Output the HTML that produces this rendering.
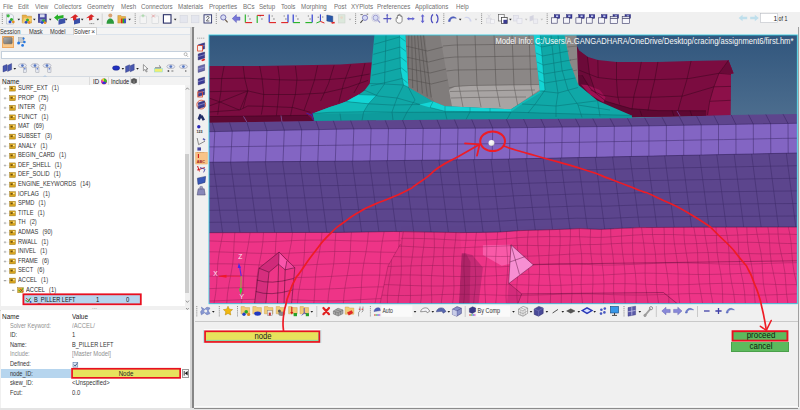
<!DOCTYPE html>
<html><head><meta charset="utf-8"><title>HyperMesh</title>
<style>
html,body{margin:0;padding:0;}
body{width:800px;height:410px;overflow:hidden;background:#f0f0f0;position:relative;font-family:"Liberation Sans",sans-serif;font-size:7px;color:#222;}
#vp{position:absolute;left:0;top:0;}
#ov{position:absolute;left:0;top:0;pointer-events:none;}
.abs{position:absolute;}
.t{position:absolute;white-space:nowrap;line-height:1;}
.t i.g{display:inline-block;width:4.9px;}

</style></head>
<body>
<svg id="vp" width="800" height="410" viewBox="0 0 800 410">
<defs><linearGradient id="bg" x1="0" y1="0" x2="0" y2="1"><stop offset="0" stop-color="#31567d"/><stop offset="0.3" stop-color="#4c6d8e"/><stop offset="1" stop-color="#7090b0"/></linearGradient><clipPath id="vpc"><rect x="209" y="35" width="588" height="268.5"/></clipPath></defs>
<rect x="209" y="35" width="588" height="268.5" fill="url(#bg)"/>
<g clip-path="url(#vpc)">
<polygon points="209.0,66.0 260.0,66.0 300.0,65.3 340.0,64.5 370.0,62.6 376.0,62.3 376.0,122.0 209.0,122.7" fill="#7b0c40" />
<polygon points="209.0,116.6 308.0,115.3 314.0,120.9 209.0,122.7" fill="#5e0832" />
<g stroke="#2e0418" stroke-width="0.5" fill="none" opacity="0.85">
<path d="M224.1 66.0L221.7 79.0L220.9 91.7L219.3 102.0L217.7 114.7M243.1 66.0L244.7 78.2L247.8 90.9M259.7 66.0L262.1 79.0L263.7 94.1L262.9 106.0L261.3 114.7M277.9 66.0L279.5 79.0L278.7 94.1L277.5 106.0L276.4 115.5M295.4 66.0L297.0 79.0L295.4 94.1L292.2 107.5L290.6 115.5M317.6 65.6L314.5 80.0L309.0 96.5L304.0 110.5"/>
<path d="M209.0 78.7L245.5 78.2L280.3 79.8L300 80.2L329 79.5L347.5 78L369.7 74M209.0 91.7L247.8 90.9L263.7 94.5L296.2 94.5L323.8 93.0L347.5 87.5L368.1 80.4M247.8 106.0L263.7 106.3L293.0 107.5L310.4 112.3M209.0 98.0L220.1 102.0L239.1 109.9M209.0 106.0L220.1 102.0L247.8 90.9M247.8 90.9L239.9 109.9M247.8 90.9L243.1 108.3M209.0 112.0L239.9 109.9L247.8 106.0"/>
<path d="M334.1 65.3L328.5 83.5L320.6 101.0M350.7 64.5L343.6 83.5L338.8 102.5M365.0 63.2L360.2 81.9L353.9 93.0"/>
<path d="M209 116.6L308 115.3"/>
</g>
<path d="M243.5 116.3L247 122.300M281 115.500L282 122" stroke="#8a72c4" stroke-width="0.6" fill="none"/>
<path d="M306.5 113.200L311.800 115.300L313.400 120.500M311.800 115.300L313.200 112.500" stroke="#2828d8" stroke-width="0.700" fill="none"/>
<polygon points="576.0,35.0 576.0,44.3 579.0,50.5 587.4,56.8 597.8,59.9 616.5,61.9 641.3,61.9 657.9,61.9 691.0,60.9 728.4,60.3 733.5,73.3 730.9,73.8 730.4,115.5 576.0,118.0" fill="#7b0c40" />
<polygon points="728.4,60.3 733.5,73.3 730.9,73.8 730.4,115.5 707.6,115.5 709.7,101.3 713.9,86.8 719.0,73.3 724.0,65.5" fill="#8c1049" />
<polygon points="719.0,73.3 728.4,60.3 733.5,73.3 730.9,73.8" fill="#6a0a38" />
<polygon points="576.0,44.3 579.0,50.5 587.4,56.8 589.5,74.4 595.7,93.0 590.0,88.0 582.0,75.0 576.0,75.0" fill="#6c0a39" />
<polygon points="578.0,75.0 582.0,75.0 590.0,88.0 595.7,93.0 606.0,101.3 631.0,108.6 658.0,110.6 706.0,110.8 706.0,116.0 578.0,118.0" fill="#5e0832" />
<polygon points="581.0,84.5 587.0,85.0 599.8,90.0 605.5,97.2 603.5,102.4 590.0,94.5" fill="#9c1052" />
<g stroke="#2e0418" stroke-width="0.5" fill="none" opacity="0.85">
<path d="M616.5 61.9L616.5 79.6L617.5 95.1L619.6 104.4M641.3 61.9L638.2 79.6L634.1 95.1L632.0 109.6M657.9 61.9L654.8 79.6L650.6 97.2L648.0 110.6M691.1 60.9L686.9 79.6L681.7 97.2L678.0 110.6M579.1 70.2L597.8 77.5L616.5 79.6L657.9 79.6L689.0 78.5L719.0 73.3M590.5 89.9L601.9 95.1L616.5 97.2L653.8 97.2L682.8 96.1L713.9 86.8M597.8 59.9L598.2 77.5M587.4 56.8L589.5 74.4L595.7 93.0M713.9 86.8L730.9 86.4M709.7 101.3L730.6 100.3M719.0 73.3L730.9 74.4"/>
<path d="M728.4 60.3L719 73.3L713.9 86.8L709.7 101.3L707.6 115"/>
<path d="M582 75L590 88L595.7 93L606 101.3L631 108.6L658 110.6L706 110.8"/>
<path d="M612 110.5L614 116"/>
<path d="M640 110.5L642 116"/>
<path d="M672 110.5L674 116"/>
<path d="M690 110.5L692 116"/>
</g>
<path d="M677 111L680 116" stroke="#7a60c0" stroke-width="0.6" fill="none"/>
<polygon points="405.0,35.0 576.5,35.0 578.5,88.0 540.0,100.0 511.0,109.3 445.0,106.3 433.0,101.6 408.3,87.2" fill="#8b8786" />
<polygon points="405.0,35.0 425.4,35.0 432.2,97.4 435.5,102.6 433.0,101.6 408.3,87.2" fill="#797574" />
<polygon points="425.4,35.0 440.0,35.0 446.0,70.0 448.8,85.7 451.7,101.3 452.0,106.6 445.0,106.3 435.5,102.6 432.2,97.4" fill="#807c7b" />
<polygon points="449.0,90.0 455.0,86.5 470.0,85.5 541.0,84.5 541.5,88.5 511.0,109.3 452.0,106.6" fill="#a8a4a3" />
<g stroke="#3c3836" stroke-width="0.5" fill="none" opacity="0.7">
<path d="M408.8 35L407.8 84.0"/>
<path d="M411.7 35L412.7 88.0"/>
<path d="M414.6 35L417.6 91.6"/>
<path d="M417.6 35L422.4 93.5"/>
<path d="M420.5 35L427.3 96.5"/>
<path d="M423.4 35L431.2 97.4"/>
<path d="M405.8 46.0L427.3 51.0"/>
<path d="M427.3 51.0L443.0 47.0"/>
<path d="M406.2 57.0L428.6 62.0"/>
<path d="M428.6 62.0L444.6 58.0"/>
<path d="M406.5 68.0L430.0 73.0"/>
<path d="M430.0 73.0L446.1 69.0"/>
<path d="M406.8 79.0L431.3 84.0"/>
<path d="M431.3 84.0L447.7 80.0"/>
<path d="M457 35L459 86L463 107"/>
<path d="M475 35L477 86L481 107"/>
<path d="M494 35L496 86L500 107"/>
<path d="M512 35L514 86L518 107"/>
<path d="M529 35L531 86L535 107"/>
<path d="M442.9 46.0L455 45.0L540 44.0"/>
<path d="M444.6 58.0L455 57.0L540 56.0"/>
<path d="M446.4 71.0L455 70.0L540 69.0"/>
<path d="M449 88L455 86.500L470 85.500L541 84.500"/>
<path d="M450 91.500L470 91L535 90"/>
<path d="M451 98L470 97.500L526 97"/>
</g>
<g stroke="#3c3836" stroke-width="0.5" fill="none" opacity="0.6">
<path d="M567.4 47L577 46"/>
<path d="M570.0 60L577 59"/>
<path d="M572.2 71L577 70"/>
</g>
<polygon points="374.4,35.0 405.4,35.0 408.3,87.2 433.0,101.6 445.0,106.3 511.0,109.3 540.0,91.0 533.7,35.0 564.5,35.0 569.7,62.0 577.0,81.6 578.5,85.0 597.6,100.7 631.7,115.4 631.7,118.3 460.0,119.6 314.6,120.9 312.8,113.5 330.0,106.9 338.8,104.2 346.2,101.6 352.8,97.7 358.9,94.6 364.5,90.5 369.8,83.5" fill="#10a8a7" />
<polygon points="312.8,113.5 361.5,113.5 400.0,112.3 511.0,112.0 520.0,112.0 540.0,113.0 631.7,115.4 631.7,118.3 460.0,119.6 314.6,120.9" fill="#0e9b9c" />
<polygon points="399.5,35.0 405.4,35.0 408.3,87.2 403.5,85.0 400.5,70.0" fill="#13d5d5" />
<polygon points="346.2,101.6 352.8,97.7 358.9,94.6 376.4,95.3 368.5,103.8" fill="#13d5d5" />
<polygon points="312.8,113.5 330.0,106.9 338.8,104.2 346.2,101.6 368.5,103.8 363.7,111.7 330.0,112.3" fill="#11bcb9" />
<polygon points="419.5,104.5 433.0,101.6 445.0,106.3 511.0,109.3 511.0,112.0 445.0,111.3 430.0,107.5" fill="#13d5d5" />
<polygon points="533.7,35.0 540.3,35.0 545.0,90.0 540.0,91.0" fill="#13d5d5" />
<polygon points="540.0,91.0 545.0,90.0 522.0,104.0 511.0,112.0 511.0,109.3" fill="#11bcb9" />
<g stroke="#075c62" stroke-width="0.5" fill="none" opacity="0.75">
<path d="M386 35L384.5 84L376.4 95.3M363.7 111.7L362 120.5"/>
<path d="M399.5 35L400.5 70L403.5 85L397 98L392 112L393 120"/>
<path d="M374.2 44.3L385.700 41.0L399.6 37.0L405.5 41.4"/>
<path d="M373.4 54.3L385.700 51.0L400.2 47.0L406.0 51.4"/>
<path d="M372.6 64.8L385.700 61.5L400.9 57.5L406.5 61.9"/>
<path d="M371.8 75.3L385.700 72.0L401.5 68.0L407.0 72.4"/>
<path d="M370.9 85.8L385.700 82.5L402.1 78.5L407.6 82.9"/>
<path d="M369.8 83.5L384.5 84L403.5 85L408.3 87.2"/>
<path d="M363 89.5L378 96L397 98L420 104.5"/>
<path d="M346.2 101.6L368.5 103.8L392 105L419.5 104.5"/>
<path d="M312.8 113.5L330 112.3L363.7 111.7L400 112.3L511 112L540 113L631.7 115.4"/>
<path d="M358.9 94.6L376.4 95.3L368.5 103.8L363.7 111.7"/>
<path d="M408.3 87.2L415 100L407 112L403 120"/>
<path d="M430 107.5L445 111.3L511 112"/>
<path d="M470 112L466 119.5M511 112L507 119.3M445 111.3L447 119.7M340 113.5L341 120.6"/>
<path d="M433 101.6L430 107.5M445 106.3L445 111.3M470 107.5L470 112M490 108.3L490 112"/>
<path d="M540.3 35L545 90L536 103L528 113"/>
<path d="M551 35L555 75L558 93L556 106L556 117"/>
<path d="M558 35L562 70L568 90L578 105L582 117.5"/>
<path d="M535.0 44L541.8 47L566.7 42"/>
<path d="M536.0 53L542.6 56L568.8 51"/>
<path d="M537.0 62L543.4 65L571.0 60"/>
<path d="M538.0 71L544.2 74L573.1 69"/>
<path d="M539.0 80L545.0 83L575.3 78"/>
<path d="M540 91L558 93L578 87.5"/>
<path d="M522 104L556 106L597.6 100.7"/>
<path d="M597.6 100.7L600 116.5"/>
<path d="M578 105L610 110"/>
</g>
<polygon points="209.0,122.7 314.0,120.9 460.0,119.6 632.0,118.2 731.5,114.9 797.0,114.0 797.0,240.0 209.0,240.0" fill="#5e458d" />
<polygon points="209.0,131.7 360.0,128.8 492.0,128.1 640.0,126.0 797.0,123.3 797.0,153.0 640.0,156.3 492.0,159.4 360.0,161.0 209.0,162.2" fill="#8365c3" />
<polygon points="209.0,162.2 360.0,161.0 492.0,159.4 640.0,156.3 797.0,153.0 797.0,240.0 209.0,240.0" fill="#5c458d" />
<g stroke="#2c1c55" stroke-width="0.5" fill="none" opacity="0.8">
<path d="M194.9 122.9L197.4 131.9"/>
<path d="M212.2 122.6L214.8 131.6"/>
<path d="M229.5 122.3L232.2 131.3"/>
<path d="M246.8 122.1L249.5 130.9"/>
<path d="M264.1 121.8L266.9 130.6"/>
<path d="M281.4 121.5L284.3 130.3"/>
<path d="M298.7 121.2L301.6 129.9"/>
<path d="M316.0 120.9L319.0 129.6"/>
<path d="M333.3 120.7L336.4 129.3"/>
<path d="M350.6 120.6L353.7 128.9"/>
<path d="M367.9 120.4L371.1 128.7"/>
<path d="M385.2 120.3L388.5 128.6"/>
<path d="M402.5 120.1L405.9 128.6"/>
<path d="M419.8 120.0L423.2 128.5"/>
<path d="M437.1 119.8L440.6 128.4"/>
<path d="M454.4 119.6L458.0 128.3"/>
<path d="M471.7 119.5L475.3 128.2"/>
<path d="M489.0 119.4L492.7 128.1"/>
<path d="M506.3 119.2L510.1 127.8"/>
<path d="M523.6 119.1L527.4 127.6"/>
<path d="M540.9 118.9L544.8 127.4"/>
<path d="M558.2 118.8L562.2 127.1"/>
<path d="M575.5 118.7L579.6 126.9"/>
<path d="M592.8 118.5L596.9 126.6"/>
<path d="M610.1 118.4L614.3 126.4"/>
<path d="M627.4 118.2L631.7 126.1"/>
<path d="M644.7 117.8L649.0 125.8"/>
<path d="M662.0 117.2L666.4 125.5"/>
<path d="M679.3 116.6L683.8 125.2"/>
<path d="M696.6 116.1L701.1 124.9"/>
<path d="M713.9 115.5L718.5 124.6"/>
<path d="M731.2 114.9L735.9 124.4"/>
<path d="M748.5 114.7L753.3 124.1"/>
<path d="M765.8 114.4L770.6 123.8"/>
<path d="M783.1 114.2L788.0 123.5"/>
<path d="M800.4 114.0L805.4 123.2"/>
</g>
<g stroke="#2c1c55" stroke-width="0.5" fill="none" opacity="0.8">
<path d="M197.4 131.9L195.9 162.3"/>
<path d="M214.8 131.6L213.3 162.2"/>
<path d="M232.2 131.3L230.7 162.0"/>
<path d="M249.5 130.9L248.1 161.9"/>
<path d="M266.9 130.6L265.6 161.8"/>
<path d="M284.3 130.3L283.0 161.6"/>
<path d="M301.7 129.9L300.4 161.5"/>
<path d="M319.0 129.6L317.8 161.3"/>
<path d="M336.4 129.3L335.3 161.2"/>
<path d="M353.8 128.9L352.7 161.1"/>
<path d="M371.1 128.7L370.1 160.9"/>
<path d="M388.5 128.6L387.5 160.7"/>
<path d="M405.9 128.6L404.9 160.5"/>
<path d="M423.2 128.5L422.4 160.2"/>
<path d="M440.6 128.4L439.8 160.0"/>
<path d="M458.0 128.3L457.2 159.8"/>
<path d="M475.4 128.2L474.6 159.6"/>
<path d="M492.7 128.1L492.1 159.4"/>
<path d="M510.1 127.8L509.5 159.0"/>
<path d="M527.5 127.6L526.9 158.7"/>
<path d="M544.8 127.4L544.3 158.3"/>
<path d="M562.2 127.1L561.7 157.9"/>
<path d="M579.6 126.9L579.2 157.6"/>
<path d="M596.9 126.6L596.6 157.2"/>
<path d="M614.3 126.4L614.0 156.8"/>
<path d="M631.7 126.1L631.4 156.5"/>
<path d="M649.0 125.8L648.9 156.1"/>
<path d="M666.4 125.5L666.3 155.7"/>
<path d="M683.8 125.2L683.7 155.4"/>
<path d="M701.2 124.9L701.1 155.0"/>
<path d="M718.5 124.6L718.5 154.6"/>
<path d="M735.9 124.4L736.0 154.3"/>
<path d="M753.3 124.1L753.4 153.9"/>
<path d="M770.6 123.8L770.8 153.6"/>
<path d="M788.0 123.5L788.2 153.2"/>
<path d="M805.4 123.2L805.7 152.8"/>
<path d="M209.0 146.9L223.7 146.8L238.4 146.6L253.1 146.4L267.8 146.2L282.5 146.0L297.2 145.8L311.9 145.6L326.6 145.4L341.3 145.2L356.0 145.0L370.7 144.8L385.4 144.7L400.1 144.6L414.8 144.4L429.5 144.3L444.2 144.2L458.9 144.0L473.6 143.9L488.3 143.8L503.0 143.6L517.7 143.3L532.4 143.0L547.1 142.8L561.8 142.5L576.5 142.3L591.2 142.0L605.9 141.7L620.6 141.5L635.3 141.2L650.0 141.0L664.7 140.7L679.4 140.4L694.1 140.1L708.8 139.8L723.5 139.6L738.2 139.3L752.9 139.0L767.6 138.7L782.3 138.4L797.0 138.2"/>
</g>
<g stroke="#2c1c55" stroke-width="0.5" fill="none" opacity="0.65">
<path d="M195.7 162.3L205.2 232.7"/>
<path d="M213.1 162.2L222.6 232.7"/>
<path d="M230.5 162.0L240.0 232.6"/>
<path d="M247.8 161.9L257.3 232.6"/>
<path d="M265.2 161.8L274.7 232.5"/>
<path d="M282.6 161.6L292.1 232.5"/>
<path d="M299.9 161.5L309.4 232.5"/>
<path d="M317.3 161.3L326.8 232.4"/>
<path d="M334.7 161.2L344.2 232.3"/>
<path d="M352.1 161.1L361.6 232.0"/>
<path d="M369.4 160.9L378.9 231.7"/>
<path d="M386.8 160.7L396.3 231.5"/>
<path d="M404.2 160.5L413.7 231.8"/>
<path d="M421.5 160.3L431.0 232.1"/>
<path d="M438.9 160.0L448.4 232.4"/>
<path d="M456.3 159.8L465.8 232.5"/>
<path d="M473.6 159.6L483.1 232.3"/>
<path d="M491.0 159.4L500.5 232.0"/>
<path d="M508.4 159.1L517.9 230.7"/>
<path d="M525.8 158.7L535.3 230.1"/>
<path d="M543.1 158.3L552.6 229.6"/>
<path d="M560.5 158.0L570.0 229.0"/>
<path d="M577.9 157.6L587.4 228.9"/>
<path d="M595.2 157.2L604.7 229.2"/>
<path d="M612.6 156.9L622.1 228.3"/>
<path d="M630.0 156.5L639.5 227.6"/>
<path d="M647.4 156.1L656.9 227.5"/>
<path d="M664.7 155.8L674.2 227.4"/>
<path d="M682.1 155.4L691.6 227.2"/>
<path d="M699.5 155.1L709.0 227.2"/>
<path d="M716.8 154.7L726.3 227.1"/>
<path d="M734.2 154.3L743.7 227.1"/>
<path d="M751.6 154.0L761.1 227.1"/>
<path d="M768.9 153.6L778.4 227.0"/>
<path d="M786.3 153.2L795.8 227.0"/>
<path d="M803.7 152.9L813.2 227.0"/>
<path d="M821.1 152.5L830.6 226.9"/>
<path d="M209.0 174.3L223.7 174.2L238.4 174.1L253.1 174.0L267.8 173.9L282.5 173.8L297.2 173.7L311.9 173.6L326.6 173.5L341.3 173.4L356.0 173.3L370.7 173.1L385.4 172.9L400.1 172.7L414.8 172.6L429.5 172.5L444.2 172.4L458.9 172.3L473.6 172.2L488.3 172.0L503.0 171.7L517.7 171.2L532.4 170.9L547.1 170.6L561.8 170.2L576.5 169.9L591.2 169.7L605.9 169.4L620.6 169.0L635.3 168.7L650.0 168.4L664.7 168.1L679.4 167.8L694.1 167.6L708.8 167.3L723.5 167.0L738.2 166.8L752.9 166.5L767.6 166.2L782.3 166.0L797.0 165.7"/>
<path d="M209.0 186.3L223.7 186.2L238.4 186.1L253.1 186.0L267.8 186.0L282.5 185.9L297.2 185.8L311.9 185.7L326.6 185.6L341.3 185.5L356.0 185.3L370.7 185.2L385.4 185.0L400.1 184.8L414.8 184.8L429.5 184.8L444.2 184.7L458.9 184.7L473.6 184.5L488.3 184.3L503.0 184.0L517.7 183.5L532.4 183.1L547.1 182.7L561.8 182.4L576.5 181.9L591.2 181.9L605.9 181.7L620.6 181.2L635.3 180.8L650.0 180.5L664.7 180.3L679.4 180.0L694.1 179.8L708.8 179.6L723.5 179.4L738.2 179.2L752.9 178.9L767.6 178.7L782.3 178.5L797.0 178.3"/>
<path d="M209.0 198.3L223.7 198.2L238.4 198.1L253.1 198.1L267.8 198.0L282.5 197.9L297.2 197.9L311.9 197.8L326.6 197.7L341.3 197.6L356.0 197.4L370.7 197.2L385.4 197.0L400.1 196.9L414.8 197.0L429.5 197.0L444.2 197.0L458.9 197.1L473.6 196.9L488.3 196.7L503.0 196.4L517.7 195.7L532.4 195.3L547.1 194.9L561.8 194.5L576.5 194.0L591.2 194.0L605.9 193.9L620.6 193.4L635.3 192.9L650.0 192.7L664.7 192.5L679.4 192.3L694.1 192.0L708.8 191.9L723.5 191.7L738.2 191.6L752.9 191.4L767.6 191.2L782.3 191.1L797.0 190.9"/>
<path d="M209.0 210.3L223.7 210.2L238.4 210.2L253.1 210.1L267.8 210.0L282.5 210.0L297.2 209.9L311.9 209.9L326.6 209.8L341.3 209.7L356.0 209.5L370.7 209.3L385.4 209.1L400.1 209.0L414.8 209.1L429.5 209.2L444.2 209.3L458.9 209.4L473.6 209.3L488.3 209.1L503.0 208.7L517.7 207.9L532.4 207.4L547.1 207.0L561.8 206.6L576.5 206.1L591.2 206.2L605.9 206.2L620.6 205.6L635.3 205.1L650.0 204.8L664.7 204.6L679.4 204.5L694.1 204.3L708.8 204.2L723.5 204.1L738.2 203.9L752.9 203.8L767.6 203.7L782.3 203.6L797.0 203.5"/>
<path d="M209.0 222.3L223.7 222.2L238.4 222.2L253.1 222.1L267.8 222.1L282.5 222.0L297.2 222.0L311.9 221.9L326.6 221.9L341.3 221.8L356.0 221.6L370.7 221.4L385.4 221.1L400.1 221.1L414.8 221.3L429.5 221.4L444.2 221.6L458.9 221.8L473.6 221.7L488.3 221.5L503.0 221.0L517.7 220.1L532.4 219.6L547.1 219.2L561.8 218.8L576.5 218.2L591.2 218.4L605.9 218.4L620.6 217.8L635.3 217.2L650.0 217.0L664.7 216.8L679.4 216.7L694.1 216.5L708.8 216.5L723.5 216.4L738.2 216.3L752.9 216.3L767.6 216.2L782.3 216.1L797.0 216.0"/>
</g>
<path d="M209.0 131.7L360.0 128.8L492.0 128.1L640.0 126.0L797.0 123.3" stroke="#2c1c55" stroke-width="0.6" fill="none" opacity="0.8"/>
<path d="M209.0 162.2L360.0 161.0L492.0 159.4L640.0 156.3L797.0 153.0" stroke="#2c1c55" stroke-width="0.6" fill="none" opacity="0.8"/>
<polygon points="209.0,232.7 340.0,232.4 393.7,231.5 460.0,232.6 480.0,232.4 500.0,232.0 520.0,230.6 540.0,230.0 560.0,229.4 580.0,228.6 600.0,229.4 620.0,228.4 640.0,227.6 695.0,227.2 797.0,227.0 797.0,304.0 209.0,304.0" fill="#ee3587" />
<polygon points="461.6,253.4 466.0,253.6 472.2,255.1 482.9,267.6 478.5,304.0 458.9,304.0" fill="#c62b76" />
<polygon points="461.6,253.4 466.0,253.6 470.5,262.0 469.5,304.0 458.9,304.0" fill="#ae2468" />
<polygon points="482.9,245.3 510.5,244.8 509.6,264.0 501.6,265.8 482.9,255.1" fill="#f95aa8" />
<polygon points="508.8,283.7 521.7,293.9 517.7,304.0 507.0,304.0" fill="#d42c7c" />
<polygon points="663.4,292.5 677.7,304.0 661.8,304.0" fill="#d42c7c" />
<polygon points="614.0,228.7 620.0,228.4 646.0,227.6 646.0,234.2 616.0,235.2" fill="#f3479b" />
<defs><clipPath id="pkL"><polygon points="209,220 402,220 400.5,244 388,266 380,304 209,304"/></clipPath><clipPath id="pkR"><polygon points="402,220 797,220 797,304 380,304 388,266 400.5,244"/></clipPath></defs>
<polygon points="402.0,231.5 460.0,232.6 461.6,253.4 458.9,304.0 380.0,304.0 388.0,266.0 400.5,244.0" fill="#e73282" />
<polygon points="533.3,264.9 797.0,260.8 797.0,227.0 695.0,227.2 640.0,227.6 620.0,228.4 600.0,229.4 580.0,228.6 560.0,229.4 540.0,230.0 520.0,230.6 511.0,244.8" fill="#e93383" />
<polygon points="521.2,294.3 663.4,292.5 677.7,304.0 516.7,304.0" fill="#e73282" />
<g stroke="#6a1040" stroke-width="0.5" fill="none" opacity="0.6" clip-path="url(#pkL)">
<path d="M196.1 232.7L195.5 242.9L194.3 253.1L192.4 263.3L190.5 273.4L189.2 283.6L188.6 293.8L188.1 304.0"/>
<path d="M208.3 232.7L207.8 242.9L207.2 253.1L206.0 263.3L204.1 273.4L202.2 283.6L201.0 293.8L200.4 304.0"/>
<path d="M222.9 232.7L221.0 242.9L219.1 253.0L217.8 263.2L217.2 273.4L216.7 283.6L215.6 293.8L213.9 304.0"/>
<path d="M234.8 232.6L234.1 242.8L233.6 253.0L232.8 263.2L231.1 273.4L229.1 283.6L227.5 293.8L226.7 304.0"/>
<path d="M250.1 232.6L248.6 242.8L246.7 253.0L244.9 263.2L243.8 273.4L243.3 283.6L242.7 293.8L241.4 304.0"/>
<path d="M263.5 232.6L262.8 242.8L261.3 253.0L259.4 263.2L257.6 273.4L256.5 283.6L256.0 293.8L255.4 304.0"/>
<path d="M276.6 232.5L275.8 242.8L275.3 253.0L274.5 263.2L273.0 273.4L271.0 283.6L269.3 293.8L268.4 304.0"/>
<path d="M292.5 232.5L291.3 242.7L289.3 252.9L287.5 263.1L286.3 273.4L285.7 283.6L285.2 293.8L284.0 304.0"/>
<path d="M305.7 232.5L304.8 242.7L304.4 252.9L303.6 263.1L302.2 273.3L300.2 283.6L298.4 293.8L297.4 304.0"/>
<path d="M322.0 232.4L321.0 242.7L319.3 252.9L317.3 263.1L315.8 273.3L315.0 283.6L314.6 293.8L313.8 304.0"/>
<path d="M335.9 232.4L335.1 242.6L334.7 252.9L333.8 263.1L332.2 273.3L330.2 283.5L328.6 293.8L327.7 304.0"/>
<path d="M351.4 232.2L350.7 242.5L350.3 252.7L349.3 263.0L347.6 273.2L345.6 283.5L344.1 293.7L343.3 304.0"/>
<path d="M368.4 231.9L367.5 242.2L365.9 252.5L363.9 262.8L362.3 273.1L361.5 283.4L361.1 293.7L360.3 304.0"/>
<path d="M384.1 231.7L382.2 242.0L380.8 252.3L380.2 262.7L379.8 273.0L378.7 283.3L376.9 293.7L374.9 304.0"/>
<path d="M399.6 231.6L399.0 242.0L398.5 252.3L397.5 262.6L395.7 273.0L393.7 283.3L392.3 293.7L391.7 304.0"/>
<path d="M416.6 231.9L416.1 242.2L415.4 252.5L413.9 262.8L411.9 273.1L410.2 283.4L409.2 293.7L408.8 304.0"/>
<path d="M209.0 240.9L217.4 241.2L225.8 241.5L234.1 241.8L242.5 242.0L250.9 242.0L259.2 241.9L267.6 241.7L276.0 241.4L284.4 241.0L292.8 240.6L301.1 240.3L309.5 240.1L317.9 240.1L326.2 240.1L334.6 240.3L343.0 240.6L351.4 240.8L359.8 241.0L368.1 241.1L376.5 241.2L384.9 241.0L393.2 240.8L401.6 240.7L410.0 240.5"/>
<path d="M209.0 251.8L217.4 251.9L225.8 252.1L234.1 252.4L242.5 252.7L250.9 253.1L259.2 253.3L267.6 253.4L276.0 253.4L284.4 253.3L292.8 253.0L301.1 252.7L309.5 252.3L317.9 252.0L326.2 251.7L334.6 251.5L343.0 251.5L351.4 251.5L359.8 251.6L368.1 251.8L376.5 252.0L384.9 252.2L393.2 252.3L401.6 252.5L410.0 252.6"/>
<path d="M209.0 263.9L217.4 263.8L225.8 263.8L234.1 264.0L242.5 264.2L250.9 264.6L259.2 264.9L267.6 265.2L276.0 265.4L284.4 265.4L292.8 265.3L301.1 265.1L309.5 264.8L317.9 264.4L326.2 264.1L334.6 263.8L343.0 263.5L351.4 263.3L359.8 263.3L368.1 263.3L376.5 263.5L384.9 263.7L393.2 263.9L401.6 264.3L410.0 264.6"/>
<path d="M209.0 276.2L217.4 276.0L225.8 275.8L234.1 275.8L242.5 275.9L250.9 276.1L259.2 276.4L267.6 276.7L276.0 277.1L284.4 277.3L292.8 277.4L301.1 277.4L309.5 277.2L317.9 276.9L326.2 276.6L334.6 276.2L343.0 275.8L351.4 275.4L359.8 275.2L368.1 275.1L376.5 275.1L384.9 275.2L393.2 275.4L401.6 275.9L410.0 276.3"/>
<path d="M209.0 288.7L217.4 288.3L225.8 288.0L234.1 287.8L242.5 287.7L250.9 287.8L259.2 288.0L267.6 288.2L276.0 288.6L284.4 288.9L292.8 289.2L301.1 289.3L309.5 289.4L317.9 289.3L326.2 289.0L334.6 288.7L343.0 288.3L351.4 287.8L359.8 287.4L368.1 287.1L376.5 286.9L384.9 286.9L393.2 286.9L401.6 287.4L410.0 287.9"/>
<path d="M209.0 301.0L217.4 300.8L225.8 300.4L234.1 300.0L242.5 299.7L250.9 299.4L259.2 299.2L267.6 299.2L276.0 299.3L284.4 299.5L292.8 299.8L301.1 300.1L309.5 300.4L317.9 300.7L326.2 300.8L334.6 300.8L343.0 300.6L351.4 300.2L359.8 299.7L368.1 299.2L376.5 298.8L384.9 298.4L393.2 298.1L401.6 298.3L410.0 298.5"/>
</g>
<g stroke="#6a1040" stroke-width="0.5" fill="none" opacity="0.6" clip-path="url(#pkR)">
<path d="M371.2 231.9L370.7 239.4L370.6 247.4L370.6 257.4L369.8 267.4L368.2 277.4L366.7 287.4L366.0 297.4L366.0 307.9"/>
<path d="M382.4 231.7L382.4 239.2L382.0 247.2L380.7 257.2L379.1 267.2L378.2 277.2L378.1 287.2L378.1 297.2L377.2 307.7"/>
<path d="M392.2 231.5L391.5 239.0L391.3 247.0L391.5 257.0L391.1 267.0L389.8 277.0L388.3 287.0L387.4 297.0L387.4 307.5"/>
<path d="M403.3 231.7L402.2 239.2L401.4 247.2L401.2 257.2L401.4 267.2L401.0 277.2L399.8 287.2L398.4 297.2L397.5 307.7"/>
<path d="M413.8 231.8L413.8 239.3L413.4 247.3L412.2 257.3L410.8 267.3L410.2 277.3L410.4 287.3L410.5 297.3L409.7 307.8"/>
<path d="M424.6 232.0L424.4 239.5L423.6 247.5L422.2 257.5L421.3 267.5L421.3 277.5L421.6 287.5L421.3 297.5L420.0 308.0"/>
<path d="M434.0 232.2L434.3 239.7L434.4 247.7L433.7 257.7L432.4 267.7L431.4 277.7L431.3 287.7L431.7 297.7L431.6 308.2"/>
<path d="M445.3 232.3L444.4 239.8L443.5 247.8L443.0 257.8L443.4 267.8L443.6 277.8L443.1 287.8L441.8 297.8L440.8 308.3"/>
<path d="M456.0 232.5L455.5 240.0L454.5 248.0L453.5 258.0L453.4 268.0L453.8 278.0L454.0 288.0L453.3 298.0L452.0 308.5"/>
<path d="M466.4 232.5L466.0 240.0L465.1 248.0L464.1 258.0L463.9 268.0L464.4 278.0L464.7 288.0L464.2 298.0L463.0 308.5"/>
<path d="M476.4 232.4L475.6 239.9L474.9 247.9L474.7 257.9L475.3 267.9L475.7 277.9L475.2 287.9L474.1 297.9L473.3 308.4"/>
<path d="M485.9 232.3L486.4 239.8L486.8 247.8L486.6 257.8L485.7 267.8L484.8 277.8L484.8 287.8L485.4 297.8L485.8 308.3"/>
<path d="M497.6 232.1L497.1 239.6L496.4 247.6L495.7 257.6L495.9 267.6L496.6 277.6L496.9 287.6L496.3 297.6L495.3 308.1"/>
<path d="M506.6 231.5L506.4 239.0L506.7 247.0L507.5 257.0L507.7 267.0L507.1 277.0L506.2 287.0L506.0 297.0L506.6 307.5"/>
<path d="M516.9 230.8L516.9 238.3L517.4 246.3L518.2 256.3L518.3 266.3L517.6 276.3L516.8 286.3L516.9 296.3L517.7 306.8"/>
<path d="M528.3 230.4L527.7 237.9L527.3 245.9L527.6 255.9L528.4 265.9L529.0 275.9L528.7 285.9L527.9 295.9L527.5 306.4"/>
<path d="M538.0 230.0L537.7 237.5L538.0 245.5L538.9 255.5L539.5 265.5L539.4 275.5L538.6 285.5L538.3 295.5L538.9 306.0"/>
<path d="M549.4 229.7L549.7 237.2L549.5 245.2L548.9 255.2L548.6 265.2L549.2 275.2L550.2 285.2L550.6 295.2L550.2 305.7"/>
<path d="M559.7 229.4L560.2 236.9L560.1 244.9L559.4 254.9L559.2 264.9L559.8 274.9L560.9 284.9L561.4 294.9L561.1 305.4"/>
<path d="M570.4 229.0L570.4 236.5L569.9 244.5L569.5 254.5L570.0 264.5L571.1 274.5L571.9 284.5L571.9 294.5L571.3 305.0"/>
<path d="M579.3 228.6L579.5 236.1L580.3 244.1L581.5 254.1L581.9 264.1L581.5 274.1L581.1 284.1L581.5 294.1L582.7 304.6"/>
<path d="M590.6 229.0L590.3 236.5L590.2 244.5L591.0 254.5L592.2 264.5L593.0 274.5L592.9 284.5L592.4 294.5L592.6 305.0"/>
<path d="M601.4 229.4L601.2 236.9L600.9 244.9L601.2 254.9L602.3 264.9L603.5 274.9L604.0 284.9L603.7 294.9L603.5 305.4"/>
<path d="M610.7 228.8L610.8 236.3L611.4 244.3L612.8 254.3L613.8 264.3L613.9 274.3L613.6 284.3L613.7 294.3L614.8 304.8"/>
<path d="M621.7 228.3L621.5 235.8L621.7 243.8L622.7 253.8L624.1 263.8L625.0 273.8L625.0 283.8L624.7 293.8L625.2 304.3"/>
<path d="M632.7 227.9L632.7 235.4L632.5 243.4L632.8 253.4L633.9 263.4L635.4 273.4L636.2 283.4L636.2 293.4L636.1 303.9"/>
<path d="M641.6 227.6L642.5 235.1L643.7 243.1L644.9 253.1L645.2 263.1L645.1 273.1L645.4 283.1L646.6 293.1L648.1 303.6"/>
<path d="M652.1 227.5L652.6 235.0L653.8 243.0L655.3 253.0L656.1 263.0L656.2 273.0L656.2 283.0L657.0 293.0L658.6 303.5"/>
<path d="M664.0 227.4L664.3 234.9L664.3 242.9L664.5 252.9L665.5 262.9L667.1 272.9L668.4 282.9L668.8 292.9L668.8 303.4"/>
<path d="M673.3 227.4L673.5 234.9L674.3 242.9L675.9 252.9L677.4 262.9L678.1 272.9L678.1 282.9L678.4 292.9L679.7 303.4"/>
<path d="M683.9 227.3L684.0 234.8L684.6 242.8L686.2 252.8L687.9 262.8L688.9 272.8L689.0 282.8L689.2 292.8L690.3 303.3"/>
<path d="M693.8 227.2L695.1 234.7L696.5 242.7L697.6 252.7L697.9 262.7L698.1 272.7L699.1 282.7L700.8 292.7L702.5 303.2"/>
<path d="M704.0 227.2L704.9 234.7L706.3 242.7L708.1 252.7L709.1 262.7L709.4 272.7L709.7 282.7L710.9 292.7L712.9 303.2"/>
<path d="M716.0 227.2L716.4 234.7L716.6 242.7L717.2 252.7L718.7 262.7L720.6 272.7L722.0 282.7L722.5 292.7L722.8 303.2"/>
<path d="M725.4 227.1L726.9 234.6L728.2 242.6L729.0 252.6L729.3 262.6L730.0 272.6L731.6 282.6L733.6 292.6L735.0 303.1"/>
<path d="M736.6 227.1L737.7 234.6L738.3 242.6L738.7 252.6L739.5 262.6L741.1 272.6L743.2 282.6L744.6 292.6L745.3 303.1"/>
<path d="M746.8 227.1L747.1 234.6L747.6 242.6L749.0 252.6L751.1 262.6L752.9 272.6L753.9 282.6L754.3 292.6L755.2 303.1"/>
<path d="M756.0 227.1L757.2 234.6L758.9 242.6L760.9 252.6L762.1 262.6L762.6 272.6L763.3 282.6L764.9 292.6L767.2 303.1"/>
<path d="M767.9 227.1L769.0 234.6L769.6 242.6L770.2 252.6L771.3 262.6L773.3 272.6L775.4 282.6L776.9 292.6L777.6 303.1"/>
<path d="M777.7 227.0L778.1 234.5L779.0 242.5L780.9 252.5L783.2 262.5L784.9 272.5L785.7 282.5L786.4 292.5L787.8 303.0"/>
<path d="M788.3 227.0L789.9 234.5L791.0 242.5L791.8 252.5L792.6 262.5L794.1 272.5L796.4 282.5L798.5 292.5L799.8 303.0"/>
<path d="M797.7 227.0L798.8 234.5L800.4 242.5L802.8 252.5L804.7 262.5L805.7 272.5L806.4 282.5L807.8 292.5L810.1 303.0"/>
<path d="M808.0 227.0L809.4 234.5L811.4 242.5L813.6 252.5L815.1 262.5L815.9 272.5L816.9 282.5L818.8 292.5L821.4 303.0"/>
<path d="M376.0 239.4L385.6 238.9L395.1 238.4L404.7 238.3L414.3 238.4L423.8 238.6L433.4 238.9L443.0 239.4L452.5 239.9L462.1 240.3L471.7 240.3L481.2 240.2L490.8 239.8L500.4 239.3L510.0 238.4L519.5 237.5L529.1 237.0L538.7 236.8L548.2 236.6L557.8 236.7L567.4 236.7L576.9 236.7L586.5 237.0L596.1 237.4L605.6 237.2L615.2 236.5L624.8 235.8L634.3 235.1L643.9 234.6L653.5 234.5L663.0 234.5L672.6 234.6L682.2 234.9L691.8 235.2L701.3 235.4L710.9 235.5L720.5 235.5L730.0 235.3L739.6 235.0L749.2 234.6L758.7 234.3L768.3 234.1L777.9 234.1L787.4 234.2L797.0 234.5"/>
<path d="M376.0 246.1L385.6 245.9L395.1 245.9L404.7 246.3L414.3 246.8L423.8 247.3L433.4 247.6L443.0 247.8L452.5 247.9L462.1 247.7L471.7 247.3L481.2 246.9L490.8 246.5L500.4 246.2L510.0 245.7L519.5 245.4L529.1 245.4L538.7 245.6L548.2 245.6L557.8 245.6L567.4 245.3L576.9 244.8L586.5 244.6L596.1 244.5L605.6 244.1L615.2 243.6L624.8 243.2L634.3 243.0L643.9 243.1L653.5 243.4L663.0 243.7L672.6 243.8L682.2 243.8L691.8 243.7L701.3 243.4L710.9 243.1L720.5 242.7L730.0 242.4L739.6 242.3L749.2 242.3L758.7 242.5L768.3 242.9L777.9 243.2L787.4 243.5L797.0 243.6"/>
<path d="M376.0 256.2L385.6 256.4L395.1 256.6L404.7 256.9L414.3 257.1L423.8 257.0L433.4 256.8L443.0 256.6L452.5 256.4L462.1 256.2L471.7 256.1L481.2 256.1L490.8 256.3L500.4 256.5L510.0 256.4L519.5 256.2L529.1 256.1L538.7 255.8L548.2 255.4L557.8 254.9L567.4 254.3L576.9 253.8L586.5 253.7L596.1 254.0L605.6 254.1L615.2 254.1L624.8 254.2L634.3 254.2L643.9 254.2L653.5 254.2L663.0 254.0L672.6 253.7L682.2 253.3L691.8 252.9L701.3 252.7L710.9 252.6L720.5 252.7L730.0 253.0L739.6 253.3L749.2 253.6L758.7 253.8L768.3 253.9L777.9 253.8L787.4 253.6L797.0 253.2"/>
<path d="M376.0 266.7L385.6 266.5L395.1 266.3L404.7 266.0L414.3 265.8L423.8 265.6L433.4 265.5L443.0 265.6L452.5 265.8L462.1 266.2L471.7 266.5L481.2 266.7L490.8 266.8L500.4 266.8L510.0 266.3L519.5 265.6L529.1 265.1L538.7 264.7L548.2 264.3L557.8 264.0L567.4 264.0L576.9 264.0L586.5 264.4L596.1 264.9L605.6 265.1L615.2 265.0L624.8 264.7L634.3 264.3L643.9 263.9L653.5 263.5L663.0 263.1L672.6 263.0L682.2 262.9L691.8 263.1L701.3 263.4L710.9 263.7L720.5 264.0L730.0 264.2L739.6 264.2L749.2 264.0L758.7 263.8L768.3 263.4L777.9 263.1L787.4 262.8L797.0 262.7"/>
<path d="M376.0 275.6L385.6 275.2L395.1 274.9L404.7 274.9L414.3 275.0L423.8 275.3L433.4 275.7L443.0 276.1L452.5 276.4L462.1 276.6L471.7 276.5L481.2 276.3L490.8 275.9L500.4 275.5L510.0 274.9L519.5 274.5L529.1 274.3L538.7 274.4L548.2 274.6L557.8 274.8L567.4 275.0L576.9 275.0L586.5 275.1L596.1 275.2L605.6 274.9L615.2 274.3L624.8 273.8L634.3 273.4L643.9 273.2L653.5 273.3L663.0 273.5L672.6 273.8L682.2 274.1L691.8 274.4L701.3 274.5L710.9 274.4L720.5 274.2L730.0 273.9L739.6 273.5L749.2 273.2L758.7 273.1L768.3 273.1L777.9 273.2L787.4 273.5L797.0 273.8"/>
<path d="M376.0 284.5L385.6 284.6L395.1 284.9L404.7 285.3L414.3 285.6L423.8 285.9L433.4 286.0L443.0 286.0L452.5 285.8L462.1 285.5L471.7 285.1L481.2 284.8L490.8 284.6L500.4 284.6L510.0 284.7L519.5 284.8L529.1 285.1L538.7 285.3L548.2 285.4L557.8 285.3L567.4 285.0L576.9 284.6L586.5 284.3L596.1 284.1L605.6 283.9L615.2 283.7L624.8 283.7L634.3 283.9L643.9 284.2L653.5 284.5L663.0 284.7L672.6 284.8L682.2 284.7L691.8 284.4L701.3 284.0L710.9 283.7L720.5 283.4L730.0 283.3L739.6 283.4L749.2 283.6L758.7 283.9L768.3 284.2L777.9 284.5L787.4 284.7L797.0 284.6"/>
<path d="M376.0 295.0L385.6 295.3L395.1 295.5L404.7 295.5L414.3 295.4L423.8 295.1L433.4 294.8L443.0 294.5L452.5 294.3L462.1 294.3L471.7 294.4L481.2 294.6L490.8 294.9L500.4 295.2L510.0 295.4L519.5 295.4L529.1 295.3L538.7 295.0L548.2 294.7L557.8 294.3L567.4 294.0L576.9 293.8L586.5 293.8L596.1 294.1L605.6 294.4L615.2 294.7L624.8 294.9L634.3 295.0L643.9 295.0L653.5 294.8L663.0 294.5L672.6 294.2L682.2 293.8L691.8 293.6L701.3 293.6L710.9 293.7L720.5 294.0L730.0 294.3L739.6 294.6L749.2 294.9L758.7 295.0L768.3 294.9L777.9 294.6L787.4 294.3L797.0 293.9"/>
</g>
<path d="M400.5 244L388 266L380 304" stroke="#6a1040" stroke-width="0.5" fill="none" opacity="0.600"/>
<path d="M209.0 232.7L340.0 232.4L393.7 231.5L460.0 232.6L480.0 232.4L500.0 232.0L520.0 230.6L540.0 230.0L560.0 229.4L580.0 228.6L600.0 229.4L620.0 228.4L640.0 227.6L695.0 227.2L797.0 227.0" stroke="#3a1440" stroke-width="0.7" fill="none" opacity="0.7"/>
<polygon points="259.0,268.2 279.1,252.1 294.8,267.7 291.5,304.0 254.5,304.0" fill="#ee3587" />
<polygon points="279.1,252.1 259.0,268.2 269.0,272.2 278.6,264.2" fill="#d02a7a" />
<polygon points="259.0,268.2 269.0,272.2 265.8,304.0 254.5,304.0" fill="#d62e7e" />
<polygon points="279.1,252.6 278.6,264.2 285.2,269.8 286.8,261.0" fill="#fa55ac" />
<polygon points="286.8,261.0 285.2,269.8 294.8,267.7" fill="#f0459c" />
<path d="M279.1 252.1L259 268.2L269 272.2L278.6 264.2L285.2 269.8L294.8 267.7ZM279.1 252.1L278.6 264.2M286.8 261L285.2 269.8M259 268.2L254.5 304M269 272.2L265.8 304M294.8 267.7L291.5 304M278.6 264.2L277.5 304M285.2 269.8L284 304M256.8 280Q270 285 293.5 278.5M255.8 291.5Q270 296.5 292.500 290" stroke="#3a0a28" stroke-width="0.6" fill="none" opacity="0.8"/>
<polygon points="511.0,244.8 533.3,264.9 508.7,283.6" fill="#f78fd2" />
<path d="M511 244.8L533.3 264.9L508.7 283.6ZM511 244.8L519.500 274.500M509.800 262L524.500 256.800M508.8 283.2L521.7 293.9L517.7 304M533 264.4L797 260.8M521.7 293.9L663.4 292.5L677.7 304" stroke="#4a0a30" stroke-width="0.6" fill="none" opacity="0.7"/>
</g>
</svg>
<div class="abs" style="left:0px;top:0px;width:800px;height:11.5px;background:#ffffff;"></div>
<span class="t" style="left:2.5px;top:3.1px;font-size:7.2px;color:#707070;transform:scaleX(0.86);transform-origin:0 50%;">File</span>
<span class="t" style="left:18px;top:3.1px;font-size:7.2px;color:#707070;transform:scaleX(0.86);transform-origin:0 50%;">Edit</span>
<span class="t" style="left:35px;top:3.1px;font-size:7.2px;color:#707070;transform:scaleX(0.86);transform-origin:0 50%;">View</span>
<span class="t" style="left:54px;top:3.1px;font-size:7.2px;color:#707070;transform:scaleX(0.86);transform-origin:0 50%;">Collectors</span>
<span class="t" style="left:87px;top:3.1px;font-size:7.2px;color:#707070;transform:scaleX(0.86);transform-origin:0 50%;">Geometry</span>
<span class="t" style="left:120.5px;top:3.1px;font-size:7.2px;color:#707070;transform:scaleX(0.86);transform-origin:0 50%;">Mesh</span>
<span class="t" style="left:140.5px;top:3.1px;font-size:7.2px;color:#707070;transform:scaleX(0.86);transform-origin:0 50%;">Connectors</span>
<span class="t" style="left:177.5px;top:3.1px;font-size:7.2px;color:#707070;transform:scaleX(0.86);transform-origin:0 50%;">Materials</span>
<span class="t" style="left:209px;top:3.1px;font-size:7.2px;color:#707070;transform:scaleX(0.86);transform-origin:0 50%;">Properties</span>
<span class="t" style="left:243px;top:3.1px;font-size:7.2px;color:#707070;transform:scaleX(0.86);transform-origin:0 50%;">BCs</span>
<span class="t" style="left:259px;top:3.1px;font-size:7.2px;color:#707070;transform:scaleX(0.86);transform-origin:0 50%;">Setup</span>
<span class="t" style="left:281px;top:3.1px;font-size:7.2px;color:#707070;transform:scaleX(0.86);transform-origin:0 50%;">Tools</span>
<span class="t" style="left:301px;top:3.1px;font-size:7.2px;color:#707070;transform:scaleX(0.86);transform-origin:0 50%;">Morphing</span>
<span class="t" style="left:334px;top:3.1px;font-size:7.2px;color:#707070;transform:scaleX(0.86);transform-origin:0 50%;">Post</span>
<span class="t" style="left:351px;top:3.1px;font-size:7.2px;color:#707070;transform:scaleX(0.86);transform-origin:0 50%;">XYPlots</span>
<span class="t" style="left:377px;top:3.1px;font-size:7.2px;color:#707070;transform:scaleX(0.86);transform-origin:0 50%;">Preferences</span>
<span class="t" style="left:415px;top:3.1px;font-size:7.2px;color:#707070;transform:scaleX(0.86);transform-origin:0 50%;">Applications</span>
<span class="t" style="left:455.5px;top:3.1px;font-size:7.2px;color:#707070;transform:scaleX(0.86);transform-origin:0 50%;">Help</span>
<div class="abs" style="left:0px;top:11.5px;width:800px;height:15px;background:#f0f0f0;"></div>
<div class="abs" style="left:0px;top:26.5px;width:800px;height:0.8px;background:#dcdcdc;"></div>
<div class="abs" style="left:0px;top:27px;width:192px;height:380px;background:#f0f0f0;"></div>
<div class="abs" style="left:0px;top:27.4px;width:190px;height:6.6px;background:#f4f4f4;"></div>
<div class="abs" style="left:0px;top:34px;width:190px;height:0.7px;background:#dbe3ec;"></div>
<div class="abs" style="left:0px;top:26.8px;width:190px;height:0.7px;background:#dbe3ec;"></div>
<div class="abs" style="left:73px;top:27px;width:23.5px;height:7.6px;background:#ffffff;border:0.5px solid #d0d0d0;border-bottom:none;box-sizing:border-box;"></div>
<span class="t" style="left:0.4px;top:28.6px;font-size:6.8px;color:#333;transform:scaleX(0.84);transform-origin:0 50%;">Session</span>
<span class="t" style="left:29px;top:28.6px;font-size:6.8px;color:#333;transform:scaleX(0.84);transform-origin:0 50%;">Mask</span>
<span class="t" style="left:50px;top:28.6px;font-size:6.8px;color:#333;transform:scaleX(0.84);transform-origin:0 50%;">Model</span>
<span class="t" style="left:74.2px;top:28.6px;font-size:6.8px;color:#333;transform:scaleX(0.84);transform-origin:0 50%;">Solver</span>
<span class="t" style="left:91.2px;top:28.85px;font-size:6.5px;color:#333;transform:scaleX(1);transform-origin:0 50%;">×</span>
<div class="abs" style="left:2px;top:35.6px;width:12px;height:12px;background:#f9c98c;border:0.6px solid #eeA860;box-sizing:border-box;"></div>
<div class="abs" style="left:1px;top:50.5px;width:190px;height:8.5px;background:#ffffff;border:0.6px solid #c5d0dc;box-sizing:border-box;"></div>
<div class="abs" style="left:0px;top:76.2px;width:192px;height:0.6px;background:#d5dbe2;"></div>
<div class="abs" style="left:0px;top:76.8px;width:192px;height:8.4px;background:#f3f3f3;"></div>
<span class="t" style="left:1.5px;top:78.9px;font-size:6.8px;color:#222;transform:scaleX(0.95);transform-origin:0 50%;">Name</span>
<span class="t" style="left:93px;top:78.9px;font-size:6.8px;color:#222;transform:scaleX(0.9);transform-origin:0 50%;">ID</span>
<span class="t" style="left:110.8px;top:78.9px;font-size:6.8px;color:#222;transform:scaleX(0.83);transform-origin:0 50%;">Include</span>
<div class="abs" style="left:89.4px;top:77px;width:0.6px;height:8px;background:#dcdcdc;"></div>
<div class="abs" style="left:107.8px;top:77px;width:0.6px;height:8px;background:#dcdcdc;"></div>
<div class="abs" style="left:129.5px;top:77px;width:0.6px;height:8px;background:#dcdcdc;"></div>
<div class="abs" style="left:139px;top:77px;width:0.6px;height:8px;background:#dcdcdc;"></div>
<div class="abs" style="left:1px;top:85.2px;width:184px;height:220.8px;background:#ffffff;"></div>
<div class="abs" style="left:185px;top:85.2px;width:5px;height:220.8px;background:#f0f0f0;"></div>
<div class="abs" style="left:185.3px;top:154px;width:4.2px;height:139px;background:#cdcdcd;"></div>
<span class="t" style="left:18.4px;top:85.05px;font-size:6.7px;color:#333;transform:scaleX(0.85);transform-origin:0 50%;">SURF_EXT<i class="g"></i>(1)</span>
<span class="t" style="left:18.4px;top:94.65px;font-size:6.7px;color:#333;transform:scaleX(0.85);transform-origin:0 50%;">PROP<i class="g"></i>(75)</span>
<span class="t" style="left:18.4px;top:104.25px;font-size:6.7px;color:#333;transform:scaleX(0.85);transform-origin:0 50%;">INTER<i class="g"></i>(2)</span>
<span class="t" style="left:18.4px;top:113.85px;font-size:6.7px;color:#333;transform:scaleX(0.85);transform-origin:0 50%;">FUNCT<i class="g"></i>(1)</span>
<span class="t" style="left:18.4px;top:123.45px;font-size:6.7px;color:#333;transform:scaleX(0.85);transform-origin:0 50%;">MAT<i class="g"></i>(69)</span>
<span class="t" style="left:18.4px;top:133.05px;font-size:6.7px;color:#333;transform:scaleX(0.85);transform-origin:0 50%;">SUBSET<i class="g"></i>(3)</span>
<span class="t" style="left:18.4px;top:142.65px;font-size:6.7px;color:#333;transform:scaleX(0.85);transform-origin:0 50%;">ANALY<i class="g"></i>(1)</span>
<span class="t" style="left:18.4px;top:152.25px;font-size:6.7px;color:#333;transform:scaleX(0.85);transform-origin:0 50%;">BEGIN_CARD<i class="g"></i>(1)</span>
<span class="t" style="left:18.4px;top:161.85px;font-size:6.7px;color:#333;transform:scaleX(0.85);transform-origin:0 50%;">DEF_SHELL<i class="g"></i>(1)</span>
<span class="t" style="left:18.4px;top:171.45px;font-size:6.7px;color:#333;transform:scaleX(0.85);transform-origin:0 50%;">DEF_SOLID<i class="g"></i>(1)</span>
<span class="t" style="left:18.4px;top:181.05px;font-size:6.7px;color:#333;transform:scaleX(0.85);transform-origin:0 50%;">ENGINE_KEYWORDS<i class="g"></i>(14)</span>
<span class="t" style="left:18.4px;top:190.65px;font-size:6.7px;color:#333;transform:scaleX(0.85);transform-origin:0 50%;">IOFLAG<i class="g"></i>(1)</span>
<span class="t" style="left:18.4px;top:200.25px;font-size:6.7px;color:#333;transform:scaleX(0.85);transform-origin:0 50%;">SPMD<i class="g"></i>(1)</span>
<span class="t" style="left:18.4px;top:209.85px;font-size:6.7px;color:#333;transform:scaleX(0.85);transform-origin:0 50%;">TITLE<i class="g"></i>(1)</span>
<span class="t" style="left:18.4px;top:219.45px;font-size:6.7px;color:#333;transform:scaleX(0.85);transform-origin:0 50%;">TH<i class="g"></i>(2)</span>
<span class="t" style="left:18.4px;top:229.05px;font-size:6.7px;color:#333;transform:scaleX(0.85);transform-origin:0 50%;">ADMAS<i class="g"></i>(90)</span>
<span class="t" style="left:18.4px;top:238.65px;font-size:6.7px;color:#333;transform:scaleX(0.85);transform-origin:0 50%;">RWALL<i class="g"></i>(1)</span>
<span class="t" style="left:18.4px;top:248.25px;font-size:6.7px;color:#333;transform:scaleX(0.85);transform-origin:0 50%;">INIVEL<i class="g"></i>(1)</span>
<span class="t" style="left:18.4px;top:257.85px;font-size:6.7px;color:#333;transform:scaleX(0.85);transform-origin:0 50%;">FRAME<i class="g"></i>(6)</span>
<span class="t" style="left:18.4px;top:267.45px;font-size:6.7px;color:#333;transform:scaleX(0.85);transform-origin:0 50%;">SECT<i class="g"></i>(6)</span>
<span class="t" style="left:18.4px;top:277.05px;font-size:6.7px;color:#333;transform:scaleX(0.85);transform-origin:0 50%;">ACCEL<i class="g"></i>(1)</span>
<span class="t" style="left:26px;top:286.65px;font-size:6.7px;color:#222;transform:scaleX(0.85);transform-origin:0 50%;">ACCEL<i class="g"></i>(1)</span>
<div class="abs" style="left:23.5px;top:294.6px;width:117.5px;height:9.8px;background:#b6d5ee;"></div>
<span class="t" style="left:34px;top:296.55px;font-size:6.7px;color:#111;transform:scaleX(0.84);transform-origin:0 50%;">B_PILLER LEFT</span>
<span class="t" style="left:96px;top:296.6px;font-size:6.6px;color:#111;transform:scaleX(0.9);transform-origin:0 50%;">1</span>
<span class="t" style="left:125.8px;top:296.6px;font-size:6.6px;color:#111;transform:scaleX(0.9);transform-origin:0 50%;">0</span>
<div class="abs" style="left:0px;top:306px;width:192px;height:4px;background:#f0f0f0;"></div>
<span class="t" style="left:92px;top:303.9px;font-size:6px;color:#777;transform:scaleX(1);transform-origin:0 50%;">...</span>
<div class="abs" style="left:0px;top:309.6px;width:192px;height:0.6px;background:#d0d0d0;"></div>
<div class="abs" style="left:1.2px;top:310.2px;width:189px;height:10.4px;background:#ffffff;"></div>
<span class="t" style="left:1.8px;top:313.9px;font-size:6.8px;color:#222;transform:scaleX(0.95);transform-origin:0 50%;">Name</span>
<span class="t" style="left:72px;top:313.9px;font-size:6.8px;color:#222;transform:scaleX(0.95);transform-origin:0 50%;">Value</span>
<div class="abs" style="left:1.2px;top:320.6px;width:189px;height:87px;background:#ffffff;"></div>
<span class="t" style="left:9.9px;top:322.65px;font-size:6.7px;color:#909090;transform:scaleX(0.84);transform-origin:0 50%;">Solver Keyword:</span>
<span class="t" style="left:72.4px;top:322.65px;font-size:6.7px;color:#909090;transform:scaleX(0.88);transform-origin:0 50%;">/ACCEL/</span>
<span class="t" style="left:9.9px;top:332.25px;font-size:6.7px;color:#333;transform:scaleX(0.84);transform-origin:0 50%;">ID:</span>
<span class="t" style="left:72.4px;top:332.25px;font-size:6.7px;color:#333;transform:scaleX(0.88);transform-origin:0 50%;">1</span>
<span class="t" style="left:9.9px;top:341.85px;font-size:6.7px;color:#333;transform:scaleX(0.84);transform-origin:0 50%;">Name:</span>
<span class="t" style="left:72.4px;top:341.85px;font-size:6.7px;color:#333;transform:scaleX(0.84);transform-origin:0 50%;">B_PILLER LEFT</span>
<span class="t" style="left:9.9px;top:351.45px;font-size:6.7px;color:#909090;transform:scaleX(0.84);transform-origin:0 50%;">Include:</span>
<span class="t" style="left:72.4px;top:351.45px;font-size:6.7px;color:#909090;transform:scaleX(0.88);transform-origin:0 50%;">[Master Model]</span>
<span class="t" style="left:9.9px;top:361.05px;font-size:6.7px;color:#333;transform:scaleX(0.84);transform-origin:0 50%;">Defined:</span>
<div class="abs" style="left:1.2px;top:368.6px;width:70px;height:9.4px;background:#b6d5ee;"></div>
<div class="abs" style="left:71.6px;top:368.3px;width:109px;height:10px;background:#e7e25c;"></div>
<span class="t" style="left:125.6px;top:370.7px;font-size:6.6px;color:#222;transform:translateX(-50%) scaleX(0.93);">Node</span>
<div class="abs" style="left:182px;top:369px;width:7.4px;height:8.6px;background:#f6f6f6;border:0.5px solid #9a9a9a;box-sizing:border-box;"></div>
<span class="t" style="left:9.9px;top:370.65px;font-size:6.7px;color:#333;transform:scaleX(0.84);transform-origin:0 50%;">node_ID:</span>
<span class="t" style="left:9.9px;top:380.25px;font-size:6.7px;color:#333;transform:scaleX(0.84);transform-origin:0 50%;">skew_ID:</span>
<span class="t" style="left:72.4px;top:380.25px;font-size:6.7px;color:#333;transform:scaleX(0.88);transform-origin:0 50%;">&lt;Unspecified&gt;</span>
<span class="t" style="left:9.9px;top:389.85px;font-size:6.7px;color:#333;transform:scaleX(0.84);transform-origin:0 50%;">Fcut:</span>
<span class="t" style="left:72.4px;top:389.85px;font-size:6.7px;color:#333;transform:scaleX(0.88);transform-origin:0 50%;">0.0</span>
<div class="abs" style="left:190.2px;top:27px;width:1.4px;height:381px;background:#d6d6d6;"></div>
<div class="abs" style="left:191.6px;top:27px;width:2.1px;height:382px;background:#868686;"></div>
<div class="abs" style="left:0px;top:407.6px;width:800px;height:2.4px;background:#e4e4e4;"></div>
<div class="abs" style="left:194px;top:406.3px;width:604px;height:0.8px;background:#fafafa;"></div>
<div class="abs" style="left:194px;top:407.6px;width:604px;height:1.5px;background:#8c8c8c;"></div>
<div class="abs" style="left:195px;top:27px;width:605px;height:8px;background:#f0f0f0;"></div>
<div class="abs" style="left:195px;top:27px;width:14px;height:277px;background:#f0f0f0;"></div>
<div class="abs" style="left:797.6px;top:27px;width:2.4px;height:380px;background:#f0f0f0;"></div>
<div class="abs" style="left:798.4px;top:27px;width:0.8px;height:380px;background:#a0a0a0;"></div>
<div class="abs" style="left:195px;top:304px;width:603px;height:17px;background:#f0f0f0;"></div>
<div class="abs" style="left:195px;top:321.2px;width:603px;height:0.7px;background:#c9c9c9;"></div>
<div class="abs" style="left:195px;top:322px;width:603px;height:83px;background:#f0f0f0;"></div>
<div class="abs" style="left:204.6px;top:330.8px;width:115.2px;height:11.6px;background:#e7e25c;"></div>
<span class="t" style="left:263.1px;top:332.2px;font-size:8.8px;color:#1a1a1a;transform:translateX(-50%) scaleX(0.87);">node</span>
<div class="abs" style="left:732px;top:330.8px;width:56px;height:10.6px;background:#5dba5d;"></div>
<div class="abs" style="left:731.2px;top:341.6px;width:57.4px;height:10.1px;background:#5dba5d;border:0.5px solid #4aa04a;border-top:none;box-sizing:border-box;"></div>
<span class="t" style="left:760.8px;top:331.2px;font-size:8.8px;color:#0c200c;transform:translateX(-50%) scaleX(0.9);">proceed</span>
<span class="t" style="left:760.8px;top:342.2px;font-size:8.8px;color:#0c200c;transform:translateX(-50%) scaleX(0.9);">cancel</span>
<svg id="ov" width="800" height="410" viewBox="0 0 800 410">
<rect x="9.6" y="86.1" width="5.8" height="5" fill="#d9a520" stroke="#8a6a10" stroke-width="0.4"/><rect x="10.6" y="87.5" width="2" height="1.6" fill="#6b5010"/><rect x="13" y="87.1" width="1.6" height="1.2" fill="#fff2b0"/>
<path d="M3.8 88.7h2.4M5 87.5v2.4" stroke="#888" stroke-width="0.5"/>
<path d="M6.5 88.7h2.5" stroke="#bbb" stroke-width="0.4" stroke-dasharray="0.6 0.6"/>
<rect x="9.6" y="95.7" width="5.8" height="5" fill="#d9a520" stroke="#8a6a10" stroke-width="0.4"/><rect x="10.6" y="97.1" width="2" height="1.6" fill="#6b5010"/><rect x="13" y="96.7" width="1.6" height="1.2" fill="#fff2b0"/>
<path d="M3.8 98.3h2.4M5 97.1v2.4" stroke="#888" stroke-width="0.5"/>
<path d="M6.5 98.3h2.5" stroke="#bbb" stroke-width="0.4" stroke-dasharray="0.6 0.6"/>
<rect x="9.6" y="105.3" width="5.8" height="5" fill="#d9a520" stroke="#8a6a10" stroke-width="0.4"/><rect x="10.6" y="106.7" width="2" height="1.6" fill="#6b5010"/><rect x="13" y="106.3" width="1.6" height="1.2" fill="#fff2b0"/>
<path d="M3.8 107.9h2.4M5 106.7v2.4" stroke="#888" stroke-width="0.5"/>
<path d="M6.5 107.9h2.5" stroke="#bbb" stroke-width="0.4" stroke-dasharray="0.6 0.6"/>
<rect x="9.6" y="114.9" width="5.8" height="5" fill="#d9a520" stroke="#8a6a10" stroke-width="0.4"/><rect x="10.6" y="116.3" width="2" height="1.6" fill="#6b5010"/><rect x="13" y="115.9" width="1.6" height="1.2" fill="#fff2b0"/>
<path d="M3.8 117.5h2.4M5 116.3v2.4" stroke="#888" stroke-width="0.5"/>
<path d="M6.5 117.5h2.5" stroke="#bbb" stroke-width="0.4" stroke-dasharray="0.6 0.6"/>
<rect x="9.6" y="124.5" width="5.8" height="5" fill="#d9a520" stroke="#8a6a10" stroke-width="0.4"/><rect x="10.6" y="125.9" width="2" height="1.6" fill="#6b5010"/><rect x="13" y="125.5" width="1.6" height="1.2" fill="#fff2b0"/>
<path d="M3.8 127.1h2.4M5 125.9v2.4" stroke="#888" stroke-width="0.5"/>
<path d="M6.5 127.1h2.5" stroke="#bbb" stroke-width="0.4" stroke-dasharray="0.6 0.6"/>
<rect x="9.6" y="134.1" width="5.8" height="5" fill="#d9a520" stroke="#8a6a10" stroke-width="0.4"/><rect x="10.6" y="135.5" width="2" height="1.6" fill="#6b5010"/><rect x="13" y="135.1" width="1.6" height="1.2" fill="#fff2b0"/>
<path d="M3.8 136.7h2.4M5 135.5v2.4" stroke="#888" stroke-width="0.5"/>
<path d="M6.5 136.7h2.5" stroke="#bbb" stroke-width="0.4" stroke-dasharray="0.6 0.6"/>
<rect x="9.6" y="143.7" width="5.8" height="5" fill="#d9a520" stroke="#8a6a10" stroke-width="0.4"/><rect x="10.6" y="145.1" width="2" height="1.6" fill="#6b5010"/><rect x="13" y="144.7" width="1.6" height="1.2" fill="#fff2b0"/>
<path d="M3.8 146.3h2.4M5 145.1v2.4" stroke="#888" stroke-width="0.5"/>
<path d="M6.5 146.3h2.5" stroke="#bbb" stroke-width="0.4" stroke-dasharray="0.6 0.6"/>
<rect x="9.6" y="153.3" width="5.8" height="5" fill="#d9a520" stroke="#8a6a10" stroke-width="0.4"/><rect x="10.6" y="154.7" width="2" height="1.6" fill="#6b5010"/><rect x="13" y="154.3" width="1.6" height="1.2" fill="#fff2b0"/>
<path d="M3.8 155.9h2.4M5 154.7v2.4" stroke="#888" stroke-width="0.5"/>
<path d="M6.5 155.9h2.5" stroke="#bbb" stroke-width="0.4" stroke-dasharray="0.6 0.6"/>
<rect x="9.6" y="162.9" width="5.8" height="5" fill="#d9a520" stroke="#8a6a10" stroke-width="0.4"/><rect x="10.6" y="164.3" width="2" height="1.6" fill="#6b5010"/><rect x="13" y="163.9" width="1.6" height="1.2" fill="#fff2b0"/>
<path d="M3.8 165.5h2.4M5 164.3v2.4" stroke="#888" stroke-width="0.5"/>
<path d="M6.5 165.5h2.5" stroke="#bbb" stroke-width="0.4" stroke-dasharray="0.6 0.6"/>
<rect x="9.6" y="172.5" width="5.8" height="5" fill="#d9a520" stroke="#8a6a10" stroke-width="0.4"/><rect x="10.6" y="173.9" width="2" height="1.6" fill="#6b5010"/><rect x="13" y="173.5" width="1.6" height="1.2" fill="#fff2b0"/>
<path d="M3.8 175.1h2.4M5 173.9v2.4" stroke="#888" stroke-width="0.5"/>
<path d="M6.5 175.1h2.5" stroke="#bbb" stroke-width="0.4" stroke-dasharray="0.6 0.6"/>
<rect x="9.6" y="182.1" width="5.8" height="5" fill="#d9a520" stroke="#8a6a10" stroke-width="0.4"/><rect x="10.6" y="183.5" width="2" height="1.6" fill="#6b5010"/><rect x="13" y="183.1" width="1.6" height="1.2" fill="#fff2b0"/>
<path d="M3.8 184.7h2.4M5 183.5v2.4" stroke="#888" stroke-width="0.5"/>
<path d="M6.5 184.7h2.5" stroke="#bbb" stroke-width="0.4" stroke-dasharray="0.6 0.6"/>
<rect x="9.6" y="191.7" width="5.8" height="5" fill="#d9a520" stroke="#8a6a10" stroke-width="0.4"/><rect x="10.6" y="193.1" width="2" height="1.6" fill="#6b5010"/><rect x="13" y="192.7" width="1.6" height="1.2" fill="#fff2b0"/>
<path d="M3.8 194.3h2.4M5 193.1v2.4" stroke="#888" stroke-width="0.5"/>
<path d="M6.5 194.3h2.5" stroke="#bbb" stroke-width="0.4" stroke-dasharray="0.6 0.6"/>
<rect x="9.6" y="201.3" width="5.8" height="5" fill="#d9a520" stroke="#8a6a10" stroke-width="0.4"/><rect x="10.6" y="202.7" width="2" height="1.6" fill="#6b5010"/><rect x="13" y="202.3" width="1.6" height="1.2" fill="#fff2b0"/>
<path d="M3.8 203.9h2.4M5 202.7v2.4" stroke="#888" stroke-width="0.5"/>
<path d="M6.5 203.9h2.5" stroke="#bbb" stroke-width="0.4" stroke-dasharray="0.6 0.6"/>
<rect x="9.6" y="210.9" width="5.8" height="5" fill="#d9a520" stroke="#8a6a10" stroke-width="0.4"/><rect x="10.6" y="212.3" width="2" height="1.6" fill="#6b5010"/><rect x="13" y="211.9" width="1.6" height="1.2" fill="#fff2b0"/>
<path d="M3.8 213.5h2.4M5 212.3v2.4" stroke="#888" stroke-width="0.5"/>
<path d="M6.5 213.5h2.5" stroke="#bbb" stroke-width="0.4" stroke-dasharray="0.6 0.6"/>
<rect x="9.6" y="220.5" width="5.8" height="5" fill="#d9a520" stroke="#8a6a10" stroke-width="0.4"/><rect x="10.6" y="221.9" width="2" height="1.6" fill="#6b5010"/><rect x="13" y="221.5" width="1.6" height="1.2" fill="#fff2b0"/>
<path d="M3.8 223.1h2.4M5 221.9v2.4" stroke="#888" stroke-width="0.5"/>
<path d="M6.5 223.1h2.5" stroke="#bbb" stroke-width="0.4" stroke-dasharray="0.6 0.6"/>
<rect x="9.6" y="230.1" width="5.8" height="5" fill="#d9a520" stroke="#8a6a10" stroke-width="0.4"/><rect x="10.6" y="231.5" width="2" height="1.6" fill="#6b5010"/><rect x="13" y="231.1" width="1.6" height="1.2" fill="#fff2b0"/>
<path d="M3.8 232.7h2.4M5 231.5v2.4" stroke="#888" stroke-width="0.5"/>
<path d="M6.5 232.7h2.5" stroke="#bbb" stroke-width="0.4" stroke-dasharray="0.6 0.6"/>
<rect x="9.6" y="239.7" width="5.8" height="5" fill="#d9a520" stroke="#8a6a10" stroke-width="0.4"/><rect x="10.6" y="241.1" width="2" height="1.6" fill="#6b5010"/><rect x="13" y="240.7" width="1.6" height="1.2" fill="#fff2b0"/>
<path d="M3.8 242.3h2.4M5 241.1v2.4" stroke="#888" stroke-width="0.5"/>
<path d="M6.5 242.3h2.5" stroke="#bbb" stroke-width="0.4" stroke-dasharray="0.6 0.6"/>
<rect x="9.6" y="249.3" width="5.8" height="5" fill="#d9a520" stroke="#8a6a10" stroke-width="0.4"/><rect x="10.6" y="250.7" width="2" height="1.6" fill="#6b5010"/><rect x="13" y="250.3" width="1.6" height="1.2" fill="#fff2b0"/>
<path d="M3.8 251.9h2.4M5 250.7v2.4" stroke="#888" stroke-width="0.5"/>
<path d="M6.5 251.9h2.5" stroke="#bbb" stroke-width="0.4" stroke-dasharray="0.6 0.6"/>
<rect x="9.6" y="258.9" width="5.8" height="5" fill="#d9a520" stroke="#8a6a10" stroke-width="0.4"/><rect x="10.6" y="260.3" width="2" height="1.6" fill="#6b5010"/><rect x="13" y="259.9" width="1.6" height="1.2" fill="#fff2b0"/>
<path d="M3.8 261.5h2.4M5 260.3v2.4" stroke="#888" stroke-width="0.5"/>
<path d="M6.5 261.5h2.5" stroke="#bbb" stroke-width="0.4" stroke-dasharray="0.6 0.6"/>
<rect x="9.6" y="268.5" width="5.8" height="5" fill="#d9a520" stroke="#8a6a10" stroke-width="0.4"/><rect x="10.6" y="269.9" width="2" height="1.6" fill="#6b5010"/><rect x="13" y="269.5" width="1.6" height="1.2" fill="#fff2b0"/>
<path d="M3.8 271.1h2.4M5 269.9v2.4" stroke="#888" stroke-width="0.5"/>
<path d="M6.5 271.1h2.5" stroke="#bbb" stroke-width="0.4" stroke-dasharray="0.6 0.6"/>
<rect x="9.6" y="278.1" width="5.8" height="5" fill="#d9a520" stroke="#8a6a10" stroke-width="0.4"/><rect x="10.6" y="279.5" width="2" height="1.6" fill="#6b5010"/><rect x="13" y="279.1" width="1.6" height="1.2" fill="#fff2b0"/>
<path d="M3.8 280.7h2.4" stroke="#444" stroke-width="0.6"/>
<path d="M6.5 280.7h2.5" stroke="#bbb" stroke-width="0.4" stroke-dasharray="0.6 0.6"/>
<path d="M12 290.3h2.4" stroke="#444" stroke-width="0.6"/>
<rect x="17.6" y="287.7" width="5.6" height="5" fill="#e0b030" stroke="#8a6a10" stroke-width="0.4"/><path d="M18.5 289.8l2 2l2.5 -3.5" stroke="#20a020" stroke-width="0.9" fill="none"/><path d="M20 288.8l3 3" stroke="#d02020" stroke-width="0.8"/>
<rect x="23.40" y="294.30" width="117.40" height="10.00" fill="none" stroke="#e81020" stroke-width="1.80"/>
<path d="M25.5 299.9l2.2 2.2l3 -4.4" stroke="#18a018" stroke-width="1" fill="none"/><path d="M26 298.1l4.5 3.6" stroke="#d02020" stroke-width="0.8"/><circle cx="30.6" cy="301.9" r="0.9" fill="#2040c0"/>
<path d="M185.8 89.6l1.6 -1.8l1.6 1.8" stroke="#555" stroke-width="0.6" fill="none"/><path d="M185.8 300.6l1.6 1.8l1.6 -1.8" stroke="#555" stroke-width="0.6" fill="none"/>
<path d="M186 308l1.4 1.5l1.4 -1.5" stroke="#555" stroke-width="0.6" fill="none"/>
<rect x="73" y="362.3" width="4.8" height="4.8" fill="#dbe8f8" stroke="#4a6a9a" stroke-width="0.5"/><path d="M73.9 364.7l1.3 1.4l2 -2.8" stroke="#203860" stroke-width="0.8" fill="none"/>
<rect x="72.05" y="368.75" width="108.10" height="9.10" fill="none" stroke="#e81020" stroke-width="1.70"/>
<path d="M184.2 371v4.6" stroke="#111" stroke-width="0.8"/><path d="M187.6 371v4.6l-2.8 -2.3z" fill="#111"/>
<path d="M205.500 340.400H318.700V332.500" fill="none" stroke="#5fd8c8" stroke-width="0.8"/><path d="M203.800 329.500H320.600" stroke="#fbfbfb" stroke-width="1.200"/><path d="M203.600 330V343M320.800 330V343" stroke="#7fd8e0" stroke-width="0.500"/>
<rect x="205.05" y="331.30" width="114.30" height="10.65" fill="none" stroke="#e81020" stroke-width="1.70"/>
<rect x="732.55" y="331.20" width="54.90" height="9.45" fill="none" stroke="#e81020" stroke-width="1.90"/>
<path d="M2.3 13.5V24.5" stroke="#555" stroke-width="0.8" stroke-dasharray="0.8 1.1"/>
<path d="M6.5 14h5l2 2v8h-7z" fill="#eef2f6" stroke="#98a4b0" stroke-width="0.5"/>
<circle cx="11.5" cy="19.5" r="1.6" fill="#30b030"/><circle cx="10.0" cy="21.7" r="1.5" fill="#2848c8"/><circle cx="13.3" cy="21.9" r="1.4" fill="#e89020"/>
<circle cx="8.2" cy="15.8" r="1.6" fill="#40b840"/>
<path d="M17.5 18.8h2.600l-1.300 1.700z" fill="#222"/>
<path d="M22.2 15h4l1 1.2h4.3v6.8h-9.3z" fill="#e8b048" stroke="#b88020" stroke-width="0.4"/><path d="M22.2 23l1.8-5.2h8.4l-1.6 5.2z" fill="#f4cc70"/>
<circle cx="27.5" cy="20.1" r="1.5" fill="#30b030"/><circle cx="26.1" cy="22.3" r="1.4" fill="#2848c8"/><circle cx="29.2" cy="22.5" r="1.4" fill="#e89020"/>
<path d="M33.0 18.8h2.600l-1.300 1.700z" fill="#222"/>
<rect x="38.2" y="14" width="8.2" height="8.6" fill="#4a4aa0" stroke="#2a2a70" stroke-width="0.4"/><rect x="40" y="14.3" width="4.6" height="3" fill="#d8dcf0"/><rect x="39.8" y="19" width="5" height="3.4" fill="#8088c8"/>
<circle cx="43.5" cy="20.6" r="1.4" fill="#30b030"/><circle cx="42.1" cy="22.6" r="1.4" fill="#2848c8"/><circle cx="45.1" cy="22.8" r="1.3" fill="#e89020"/>
<path d="M48.9 18.8h2.600l-1.300 1.700z" fill="#222"/>
<path d="M58.5 19.5l6.8-1.6v5.2l-6.8 1.6z" fill="#3a50a8"/><path d="M54 17.5l4-3.2v1.8l5.5-1.2v3l-5.5 1.2v1.8z" fill="#28b028"/>
<path d="M64.9 18.8h2.600l-1.300 1.700z" fill="#222"/>
<path d="M74 19.5l6-1.4v5l-6 1.4z" fill="#3a50a8"/><path d="M70 18.2l5.2-4 3.2 2.2-2 .5 0 2.8-3.4.8v-2.8z" fill="#d82828"/>
<path d="M80.9 18.8h2.600l-1.300 1.700z" fill="#222"/>
<path d="M86 18.2l5.2-4 3.2 2.2-2 .5 0 2.8-3.4.8v-2.8z" fill="#d82828"/><path d="M89.5 23.6h5" stroke="#555" stroke-width="0.7" stroke-dasharray="1 0.6"/>
<path d="M96.5 18.8h2.600l-1.300 1.700z" fill="#222"/>
<path d="M102.2 13.5V25" stroke="#c8c8c8" stroke-width="0.7"/>
<circle cx="110.3" cy="15.6" r="2" fill="#d8a070"/><path d="M106.6 23.8c0-4 2-5.4 3.7-5.4s3.7 1.4 3.7 5.4z" fill="#2c9a3c"/>
<path d="M117.8 15.5h3.2l.8 1h3.8v6.6h-7.8z" fill="#e8b048" stroke="#b88020" stroke-width="0.4"/><rect x="121" y="18.6" width="1.6" height="4.6" fill="#e02020"/><rect x="122.6" y="18.6" width="1.6" height="4.6" fill="#20b020"/><rect x="124.2" y="18.6" width="1.6" height="4.6" fill="#2040e0"/>
<path d="M128.3 18.8h2.600l-1.300 1.700z" fill="#222"/>
<path d="M135.2 13.5V24.5" stroke="#555" stroke-width="0.8" stroke-dasharray="0.8 1.1"/>
<rect x="140" y="16" width="6.6" height="7.4" fill="#f4f4f4" stroke="#c8ccd0" stroke-width="0.5"/><path d="M141.5 15.8h3M143 14.3v3" stroke="#a8d8a8" stroke-width="1.1"/>
<rect x="152" y="16" width="6.6" height="7.4" fill="#f4f4f4" stroke="#c8ccd0" stroke-width="0.5"/><path d="M152 14.6l2.8 2.8M154.8 14.6l-2.8 2.8" stroke="#e8a8a8" stroke-width="1"/>
<rect x="163.4" y="14.7" width="7.6" height="8.4" fill="#ffffff" stroke="#2a3068" stroke-width="1.1"/>
<path d="M173.9 18.8h2.600l-1.300 1.700z" fill="#222"/>
<rect x="180" y="15.4" width="7.4" height="7.4" fill="#e4e6ee" stroke="#d0d2dc" stroke-width="0.5"/><rect x="191.6" y="15.4" width="7.4" height="7.4" fill="#e4e6ee" stroke="#d0d2dc" stroke-width="0.5"/>
<rect x="204" y="14.8" width="7.6" height="8.2" fill="#f4f6fa" stroke="#2a3068" stroke-width="0.9"/><path d="M206.5 17.6c.2-1.6 2.6-1.6 2.6 0 0 1.2-2.4 1.6-2.6 3.4h2.8" stroke="#333" stroke-width="0.7" fill="none"/>
<path d="M216.3 13.5V24.5" stroke="#555" stroke-width="0.8" stroke-dasharray="0.8 1.1"/>
<circle cx="223.3" cy="17.4" r="2.6" fill="#d8dcf4" stroke="#5a5aa8" stroke-width="0.8"/><path d="M225.2 19.6l2.4 2.8" stroke="#6a5a48" stroke-width="1.2"/>
<path d="M232.2 18.6l4.2-4v2.4h3.6v3.2h-3.6v2.4z" fill="#7878d8" stroke="#4a4ab0" stroke-width="0.4"/>
<path d="M245.3 14.5V22.6" stroke="#20b020" stroke-width="1.1"/><path d="M245.3 22.6H252.1" stroke="#e02020" stroke-width="1.1"/>
<path d="M249.2 19h1.6M247.7 16h1.2" stroke="#333" stroke-width="0.6"/>
<path d="M257.2 15.4V23" stroke="#20b020" stroke-width="1.1"/><path d="M257.2 15.4H264.0" stroke="#e02020" stroke-width="1.1"/>
<path d="M261.1 19h1.6M259.6 16h1.2" stroke="#333" stroke-width="0.6"/>
<path d="M269.2 14.5V22.6" stroke="#2030d0" stroke-width="1.1"/><path d="M269.2 22.6H276.0" stroke="#e02020" stroke-width="1.1"/>
<path d="M273.1 19h1.6M271.6 16h1.2" stroke="#333" stroke-width="0.6"/>
<path d="M288.0 14.5V22.6" stroke="#2030d0" stroke-width="1.1"/><path d="M281.2 22.6H288.0" stroke="#e02020" stroke-width="1.1"/>
<path d="M285.1 19h1.6M283.6 16h1.2" stroke="#333" stroke-width="0.6"/>
<path d="M293.2 14.5V22.6" stroke="#2030d0" stroke-width="1.1"/><path d="M293.2 22.6H300.0" stroke="#20b020" stroke-width="1.1"/>
<path d="M297.1 19h1.6M295.6 16h1.2" stroke="#333" stroke-width="0.6"/>
<path d="M312.2 14.5V22.6" stroke="#2030d0" stroke-width="1.1"/><path d="M305.4 22.6H312.2" stroke="#20b020" stroke-width="1.1"/>
<path d="M309.3 19h1.6M307.8 16h1.2" stroke="#333" stroke-width="0.6"/>
<path d="M320.4 14.4V21.4" stroke="#2030d0" stroke-width="1"/><path d="M320.4 21.4l-4 1.6" stroke="#20b020" stroke-width="1"/><path d="M320.4 21.4l4 1.6" stroke="#e02020" stroke-width="1"/><path d="M317.6 17.2h1.4M322 17h1.4" stroke="#333" stroke-width="0.6"/>
<path d="M326.8 15l6 1.2v6l-6-1.2z" fill="#2858a8" stroke="#183878" stroke-width="0.4"/><path d="M331 22.6l3.4-.8.6 1.4-3 .6z" fill="#e02020"/>
<rect x="338.4" y="14.8" width="6.6" height="8.2" fill="#dce8dc" stroke="#c8d0c8" stroke-width="0.5"/><circle cx="341.6" cy="17.6" r="1.4" fill="#e8d8c8"/>
<path d="M348.7 18.8h2.600l-1.300 1.700z" fill="#b8b8b8"/>
<path d="M355.6 13.5V24.5" stroke="#555" stroke-width="0.8" stroke-dasharray="0.8 1.1"/>
<circle cx="365" cy="17.8" r="2.6" fill="#d8dcf4" stroke="#6a6ab8" stroke-width="0.8"/><path d="M362.8 20l-2.4 2.8" stroke="#444" stroke-width="1.1"/><path d="M360.4 14.6h2.4M366.6 14.2h1.6" stroke="#444" stroke-width="0.7"/>
<circle cx="375.6" cy="17.8" r="2.6" fill="#d8dcf4" stroke="#8a8ac8" stroke-width="0.8"/><path d="M377.6 19.8l2.4 2.8" stroke="#8a8ac8" stroke-width="1.1"/><circle cx="375.6" cy="17.8" r="4" fill="none" stroke="#b8b8d8" stroke-width="0.5"/>
<path d="M387.2 14.8v8M383.4 18.6h7.6" stroke="#5858c0" stroke-width="1.1"/><path d="M387.2 13.8l-1.2 1.6h2.4zM391.8 18.6l-1.6-1.2v2.4z" fill="#5858c0"/>
<path d="M396.2 18.4c0-1 1.2-1 1.2 0v-2.6c0-1 1.2-1 1.2 0v-.8c0-1 1.2-1 1.2 0v.8c0-1 1.2-1 1.2 0v1c0-.9 1.1-.9 1.1 0v3.6c0 1.6-1 2.8-2.8 2.8s-2.6-.8-3.2-2.2z" fill="#fafafa" stroke="#444" stroke-width="0.6"/>
<path d="M406.8 18.8l2.4-1.8v1.1h3.2v-1.1l2.4 1.8-2.4 1.8v-1.1h-3.2v1.1z" fill="#6464d0"/>
<path d="M422.6 14.2l1.9 2.4h-1.2v4.2h1.2l-1.9 2.4-1.9-2.4h1.2v-4.2h-1.2z" fill="#6464d0"/>
<path d="M433 14.4c-2.4 1.6-2.4 7 0 8.6M436.2 14.4c2.4 1.6 2.4 7 0 8.6" stroke="#5050c0" stroke-width="1.3" fill="none"/>
<path d="M443.8 13.5V24.5" stroke="#555" stroke-width="0.8" stroke-dasharray="0.8 1.1"/>
<path d="M448.4 21.4c.4-3.4 3-5 5.600-4.600l2.400 1.400-2.400-.2c-2.400-.2-3.800 1.200-3.800 3.400z" fill="#5868c8" stroke="#3848a8" stroke-width="0.5"/>
<path d="M458.9 18.8h2.600l-1.300 1.700z" fill="#222"/>
<path d="M471.600 21.400c-.4-3.400-3-5-5.600-4.600l-2.400 1.400 2.400-.2c2.400-.2 3.800 1.200 3.800 3.400z" fill="#d0d4ec"/>
<path d="M474.7 18.8h2.600l-1.300 1.700z" fill="#c0c0c0"/>
<path d="M481.6 13.5V24.5" stroke="#555" stroke-width="0.8" stroke-dasharray="0.8 1.1"/>
<rect x="486.600" y="18.400" width="4.600" height="4.600" fill="#ececf0" stroke="#d4d4dc" stroke-width="0.5"/><rect x="490.600" y="19.600" width="4" height="4" fill="#f4f4f8" stroke="#d4d4dc" stroke-width="0.5"/><path d="M487.600 14.400l3 4M490.600 14.400l-3 4" stroke="#d8d8e0" stroke-width="0.8"/>
<rect x="498.600" y="14.400" width="5.600" height="6.600" fill="#f8f8fa" stroke="#555" stroke-width="0.6"/><rect x="501.600" y="17.600" width="5.600" height="6" fill="#ffffff" stroke="#333" stroke-width="0.7"/><rect x="503.400" y="19.800" width="3.800" height="3.800" fill="#3a3a90"/>
<path d="M509.1 18.8h2.600l-1.300 1.700z" fill="#222"/>
<rect x="513.600" y="15.400" width="5" height="5.600" fill="#e8e8f0" stroke="#d0d0dc" stroke-width="0.5"/><rect x="517" y="18.400" width="5" height="5" fill="#f0f0f6" stroke="#d0d0dc" stroke-width="0.5"/>
<path d="M524.9 18.8h2.600l-1.300 1.700z" fill="#c0c0c0"/>
<path d="M529.600 16.600l4-1.600v5l-4 1.600z" fill="#d4d4e0"/><rect x="533.400" y="19" width="4.400" height="4.400" fill="#ececf2" stroke="#d4d4dc" stroke-width="0.5"/>
<path d="M540.5 18.8h2.600l-1.300 1.700z" fill="#c0c0c0"/>
<path d="M547.2 13.5V24.5" stroke="#555" stroke-width="0.8" stroke-dasharray="0.8 1.1"/>
<rect x="554.2" y="14.600" width="5.600" height="3.800" fill="#3a3a98" stroke="#22226a" stroke-width="0.4"/><rect x="556.0" y="15.400" width="2.200" height="1.600" fill="#c0c8f0"/>
<rect x="551.4" y="17.800" width="5.800" height="5.400" fill="#f4f4fa" stroke="#333360" stroke-width="0.6"/>
<rect x="566.4" y="14.600" width="5.600" height="3.800" fill="#3a3a98" stroke="#22226a" stroke-width="0.4"/><rect x="568.2" y="15.400" width="2.200" height="1.600" fill="#c0c8f0"/>
<rect x="563.6" y="17.800" width="5.800" height="5.400" fill="#f4f4fa" stroke="#333360" stroke-width="0.6"/>
<rect x="578.7" y="14.600" width="5.600" height="3.800" fill="#3a3a98" stroke="#22226a" stroke-width="0.4"/><rect x="580.5" y="15.400" width="2.200" height="1.600" fill="#c0c8f0"/>
<rect x="575.9" y="17.800" width="5.800" height="5.400" fill="#f4f4fa" stroke="#333360" stroke-width="0.6"/>
<rect x="589.2" y="14.600" width="5.600" height="3.800" fill="#3a3a98" stroke="#22226a" stroke-width="0.4"/><rect x="591.0" y="15.400" width="2.200" height="1.600" fill="#c0c8f0"/>
<rect x="586.4" y="17.800" width="5.800" height="5.400" fill="#f4f4fa" stroke="#333360" stroke-width="0.6"/>
<rect x="601.4" y="14.600" width="5.600" height="3.800" fill="#3a3a98" stroke="#22226a" stroke-width="0.4"/><rect x="603.2" y="15.400" width="2.200" height="1.600" fill="#c0c8f0"/>
<rect x="598.6" y="17.800" width="5.800" height="5.400" fill="#f4f4fa" stroke="#333360" stroke-width="0.6"/>
<rect x="613.0" y="14.600" width="5.600" height="3.800" fill="#3a3a98" stroke="#22226a" stroke-width="0.4"/><rect x="614.8" y="15.400" width="2.200" height="1.600" fill="#c0c8f0"/>
<rect x="610.2" y="16.600" width="7.200" height="6.800" fill="#f4f4fa" stroke="#333360" stroke-width="0.6"/><path d="M610.2 18.400h7.200" stroke="#333360" stroke-width="0.8"/>
<rect x="625.0" y="14.600" width="5.600" height="3.800" fill="#3a3a98" stroke="#22226a" stroke-width="0.4"/><rect x="626.8" y="15.400" width="2.200" height="1.600" fill="#c0c8f0"/>
<rect x="622.2" y="16.600" width="7.200" height="6.800" fill="#f4f4fa" stroke="#333360" stroke-width="0.6"/><path d="M622.2 18.400h7.200" stroke="#333360" stroke-width="0.8"/>
<path d="M738.600 18l4-3.200v1.900h4.600v2.600h-4.600v1.900z" fill="#bfdfec"/><path d="M758.800 18l-4-3.200v1.900h-4.600v2.600h4.600v1.900z" fill="#bfdfec"/>
<rect x="760.600" y="13.600" width="17" height="8.800" fill="#ffffff" stroke="#b4b8c0" stroke-width="0.5"/>
<text x="773.600" y="20.700" font-family="Liberation Sans, sans-serif" font-size="6.8" fill="#222">1</text><text x="778.600" y="20.700" font-family="Liberation Sans, sans-serif" font-size="6.8" fill="#222" textLength="8.800" lengthAdjust="spacingAndGlyphs">of 1</text><path d="M196.8 306.0V317.0" stroke="#555" stroke-width="0.8" stroke-dasharray="0.8 1.1"/>
<g transform="translate(205.7 311)"><path d="M-4.300 -3.800l3 2 2.600-2 3 0.800-1.800 2.800 1.800 2.800-3 1.200-2.600-2-3 2-0.800-3 1.600-2z" fill="#8898d0" stroke="#5868b0" stroke-width="0.5"/><circle r="1.500" fill="#f0f0f0"/></g>
<path d="M212.0 311.0h2.600l-1.300 1.700z" fill="#222"/>
<path d="M219.3 306.0V317.0" stroke="#555" stroke-width="0.8" stroke-dasharray="0.8 1.1"/>
<path d="M228 306.200l1.400 3 3.200.4-2.400 2.200.6 3.200-2.800-1.600-2.800 1.600.6-3.200-2.400-2.200 3.200-.4z" fill="#f0b810" stroke="#b88400" stroke-width="0.5"/>
<path d="M237.5 306.0V317.0" stroke="#555" stroke-width="0.8" stroke-dasharray="0.8 1.1"/>
<path d="M241.0 306.6h3.400l.8 1h4.400v6.200h-8.600z" fill="#f2cc78" stroke="#c89838" stroke-width="0.4"/>
<circle cx="246.200" cy="311.800" r="1.800" fill="#28a828"/><circle cx="244" cy="314.200" r="1.700" fill="#2040c8"/><circle cx="248.600" cy="314.400" r="1.600" fill="#e08820"/>
<path d="M252.8 306.6h3.400l.8 1h4.400v6.200h-8.600z" fill="#f2cc78" stroke="#c89838" stroke-width="0.4"/>
<ellipse cx="257.600" cy="313.600" rx="3.400" ry="2.200" fill="#2038c0"/>
<path d="M264.4 306.6h3.400l.8 1h4.400v6.200h-8.600z" fill="#f2cc78" stroke="#c89838" stroke-width="0.4"/>
<rect x="267.400" y="310.600" width="4.800" height="5" fill="#e8e8f0" stroke="#777" stroke-width="0.4"/><rect x="268.800" y="312.600" width="2" height="3" fill="#c03030"/>
<path d="M276.2 306.6h3.400l.8 1h4.400v6.200h-8.600z" fill="#f2cc78" stroke="#c89838" stroke-width="0.4"/>
<ellipse cx="281.600" cy="313.800" rx="3.200" ry="2.200" fill="#8a8a8a"/><circle cx="279.400" cy="311" r="1.500" fill="#5a5a5a"/>
<path d="M288.6 306.6h3.400l.8 1h4.400v6.200h-8.600z" fill="#f2cc78" stroke="#c89838" stroke-width="0.4"/>
<path d="M291.800 307v6" stroke="#d01818" stroke-width="1.100"/><path d="M291.800 314.500l-1.600-2.600h3.200z" fill="#d01818"/><rect x="293.600" y="313" width="3.400" height="3.200" fill="#28a028"/>
<path d="M300.0 306.6h3.400l.8 1h4.400v6.200h-8.600z" fill="#f2cc78" stroke="#c89838" stroke-width="0.4"/>
<path d="M304.200 308v5l-2.400 2.400M304.200 313l3 1" stroke="#3838c0" stroke-width="0.8" fill="none"/><rect x="305.800" y="313.200" width="3.200" height="3" fill="#28a028"/>
<path d="M310.5 311.0h2.600l-1.300 1.700z" fill="#222"/>
<path d="M316.8 306.0V317.0" stroke="#b8b8b8" stroke-width="0.7"/>
<path d="M323.400 308l5.600 6.200M329 308l-5.600 6.200" stroke="#e02020" stroke-width="2.200" stroke-linecap="round"/>
<path d="M333.400 311l4.600-2.800 5 1.800v3.600l-4.800 2.400-4.800-2z" fill="#a8a8a8" stroke="#666" stroke-width="0.5"/><path d="M333.400 311l4.800 1.800 4.800-2.800M338.200 312.800v3.200M335.800 309.600l4.800 1.800M335.600 312v2.800M340.600 311.600v3.200" stroke="#555" stroke-width="0.4" fill="none"/>
<path d="M345.2 307.0h3.400l.8 1h4.400v6.200h-8.600z" fill="#f2cc78" stroke="#c89838" stroke-width="0.4"/>
<path d="M347 312.600l4.600-2.400 1.600 2.800-4.400 2.400z" fill="#e02828"/>
<path d="M360 306.600v4.400l-1.400 1.200v4.200M363 306.600v4.400l-1.400 1.200" stroke="#888" stroke-width="0.800" fill="none"/><path d="M358.800 309.200h1.400M361.600 309.200h1.400" stroke="#e02020" stroke-width="1"/>
<path d="M370.4 306.0V317.0" stroke="#555" stroke-width="0.8" stroke-dasharray="0.8 1.1"/>
<rect x="381.400" y="305.400" width="31" height="11.400" fill="#fafafa"/>
<path d="M374 311.600c.4-3 3-4.600 5.800-3.400l.6 2.400-3 .4c-1.400.2-2.400.6-3.400.6z" fill="#5060b8" stroke="#303890" stroke-width="0.4"/><path d="M374 315h1.600" stroke="#e02020" stroke-width="1"/><path d="M375.600 315h1.600" stroke="#20b020" stroke-width="1"/><path d="M377.200 315h1.600" stroke="#2040e0" stroke-width="1"/><path d="M378.800 315h1.500" stroke="#c020c0" stroke-width="1"/>
<text x="382.400" y="313.400" font-family="Liberation Sans, sans-serif" font-size="6.400" fill="#333" textLength="10.600" lengthAdjust="spacingAndGlyphs">Auto</text>
<path d="M413.7 311.0h2.600l-1.300 1.700z" fill="#222"/>
<path d="M420.600 311.800c.4-3.200 4-4.800 7.200-3.400l2 2.800-2.600 1.600-1-1.600c-2 .2-3.600.6-5.600.6z" fill="#f4f4f8" stroke="#555" stroke-width="0.6"/>
<path d="M431.5 311.0h2.600l-1.300 1.700z" fill="#222"/>
<path d="M436.400 311.800c.4-3.200 4-4.800 7.200-3.400l2.400 3-2.800 1.800-1.200-2c-2 .2-3.600.6-5.600.6z" fill="#5868b0" stroke="#303878" stroke-width="0.5"/>
<path d="M447.5 311.0h2.600l-1.300 1.700z" fill="#222"/>
<path d="M452.400 309.200l4.600-2.600 4.400 1.600v5.200l-4.600 2.800-4.400-1.800z" fill="#8890c8" stroke="#383878" stroke-width="0.5"/><path d="M452.400 309.200l4.400 1.800 4.600-2.800M456.800 311v5.200" stroke="#383878" stroke-width="0.5" fill="none"/><path d="M452.400 309.200l4.400 1.800v5.200l-4.400-1.800z" fill="#c8cce8"/>
<path d="M465.2 306.0V317.0" stroke="#b8b8b8" stroke-width="0.7"/>
<rect x="476.400" y="305.400" width="33.600" height="11.400" fill="#fafafa"/>
<path d="M469.400 308.400l3.200-1.600 3 1.200v3.600l-3.200 1.800-3-1.200z" fill="#3a3a88" stroke="#22225a" stroke-width="0.4"/><path d="M469.200 315h1.600" stroke="#e02020" stroke-width="1"/><path d="M470.800 315h1.600" stroke="#20b020" stroke-width="1"/><path d="M472.400 315h1.600" stroke="#2040e0" stroke-width="1"/><path d="M474 315h1.500" stroke="#c020c0" stroke-width="1"/>
<text x="477.600" y="313.400" font-family="Liberation Sans, sans-serif" font-size="6.600" fill="#333" textLength="22.400" lengthAdjust="spacingAndGlyphs">By Comp</text>
<path d="M512.2 311.0h2.600l-1.300 1.700z" fill="#222"/>
<path d="M518.600 309l4.600-2.600 4.400 1.600v5.400l-4.600 2.800-4.400-1.800z" fill="#f0f0f0" stroke="#666" stroke-width="0.5"/><path d="M518.600 309l4.400 1.800 4.600-2.800M523 310.800v5.400M520.800 307.800l4.400 1.800M520.800 310v5.200M525.200 309.800v5.400M518.600 311.800l4.400 1.800 4.600-2.800" stroke="#777" stroke-width="0.4" fill="none"/>
<path d="M529.7 311.0h2.600l-1.300 1.700z" fill="#222"/>
<path d="M534.200 309l4.600-2.600 4.400 1.600v5.400l-4.600 2.800-4.400-1.800z" fill="#4a4a98" stroke="#2a2a68" stroke-width="0.5"/><path d="M534.200 309l4.400 1.800 4.600-2.800M538.600 310.800v5.400" stroke="#9090d0" stroke-width="0.4" fill="none"/>
<path d="M545.6 311.0h2.600l-1.300 1.700z" fill="#222"/>
<path d="M552.600 313l5.400-3.600" stroke="#555" stroke-width="1"/>
<path d="M561.5 311.0h2.600l-1.300 1.700z" fill="#222"/>
<path d="M566.600 311l4.200-2.200 4.200 2.200-4.200 2.200z" fill="#555" stroke="#333" stroke-width="0.4"/>
<path d="M577.5 311.0h2.600l-1.300 1.700z" fill="#222"/>
<path d="M582.200 310.600l4.800-2.800 5 2.800-5 2.800z" fill="#d8e0ff" stroke="#2838b8" stroke-width="1.400"/>
<path d="M593.4 311.0h2.600l-1.300 1.700z" fill="#222"/>
<circle cx="601" cy="313.600" r="1.300" fill="#4858c0"/><circle cx="604.400" cy="312.400" r="1.300" fill="#4858c0"/><circle cx="601.400" cy="309.800" r="1.300" fill="#4858c0"/><circle cx="604.800" cy="308.600" r="1.300" fill="#4858c0"/>
<rect x="610.400" y="306.400" width="8.200" height="6.600" fill="#3898e8" stroke="#18487a" stroke-width="0.6"/><path d="M614.500 313v2M612 315.400h5" stroke="#333" stroke-width="0.9"/>
<path d="M624.0 306.0V317.0" stroke="#555" stroke-width="0.8" stroke-dasharray="0.8 1.1"/>
<path d="M628 307.600l7.600-1.400v8.600l-7.600 1.400z" fill="#5a5aa8" stroke="#33337a" stroke-width="0.4"/><path d="M628 311.800l7.600-1.400M631.800 306.900v8.600" stroke="#e0e0f8" stroke-width="0.6"/>
<path d="M638.5 311.0h2.600l-1.300 1.700z" fill="#222"/>
<path d="M644.800 315.600l5.400-6.400" stroke="#a0a0a0" stroke-width="1.800" stroke-linecap="round"/><circle cx="651" cy="308.200" r="1.600" fill="none" stroke="#909090" stroke-width="1"/><circle cx="645" cy="315.400" r="1.200" fill="none" stroke="#909090" stroke-width="0.8"/>
<path d="M656.3 306.0V317.0" stroke="#b8b8b8" stroke-width="0.7"/>
<path d="M661.800 311l4.200-3.800v2.200h4.200v3.200h-4.200v2.200z" fill="#8888d8" stroke="#5050a8" stroke-width="0.400"/>
<path d="M682 311l-4.200-3.800v2.200h-4.200v3.200h4.200v2.200z" fill="#8888d8" stroke="#5050a8" stroke-width="0.400"/>
<path d="M685.400 313c.4-3.400 3-5 5.600-4.600l2.600 1.400-2.600-.2c-2.400-.2-3.800 1.200-3.800 3.400z" fill="#7080d0" stroke="#4858b0" stroke-width="0.500"/>
<path d="M697.5 306.0V317.0" stroke="#b8b8b8" stroke-width="0.7"/>
<path d="M704 311h5.600" stroke="#4040a8" stroke-width="1.300"/><path d="M715.400 311h6.200M718.500 307.900v6.200" stroke="#4040a8" stroke-width="1.300"/>
<path d="M726.200 313c.4-3.400 3-5 5.600-4.600l2.600 1.400-2.600-.2c-2.400-.2-3.800 1.200-3.800 3.400z" fill="#7080d0" stroke="#4858b0" stroke-width="0.500"/>
<path d="M197.400 38.200h8" stroke="#666" stroke-width="0.8" stroke-dasharray="0.8 1.200"/>
<path d="M198.2 44.8l6.400-2v6l-6.400 2z" fill="#3a3a90" stroke="#20205a" stroke-width="0.400"/><path d="M198.2 47.4l6.400-2" stroke="#c0c4e8" stroke-width="0.500"/>
<rect x="197.600" y="45.600" width="5" height="5.400" fill="#f4f0f0" stroke="#e04828" stroke-width="0.800"/>
<path d="M198.2 54.0l6.400-2v6l-6.400 2z" fill="#3a3a90" stroke="#20205a" stroke-width="0.400"/><path d="M198.2 56.6l6.400-2" stroke="#c0c4e8" stroke-width="0.500"/>
<path d="M201 60l3.400-1.600.8 1.600-2.600 1.200z" fill="#e02020"/>
<path d="M198.2 66.4l6.400-2v6l-6.400 2z" fill="#6a6ab0" stroke="#20205a" stroke-width="0.400"/><path d="M198.2 69.0l6.400-2" stroke="#c0c4e8" stroke-width="0.500"/>
<path d="M198.2 79.0l6.400-2v6l-6.400 2z" fill="#3a3a98" stroke="#20205a" stroke-width="0.400"/><path d="M198.2 81.6l6.400-2" stroke="#c0c4e8" stroke-width="0.500"/>
<path d="M198.2 90.6l6.400-2v6l-6.400 2z" fill="#3a3a90" stroke="#20205a" stroke-width="0.400"/><path d="M198.2 93.2l6.400-2" stroke="#c0c4e8" stroke-width="0.500"/>
<rect x="197.800" y="92" width="4.600" height="5" fill="none" stroke="#e04828" stroke-width="0.800"/>
<circle cx="201.200" cy="104.600" r="4.400" fill="#f4e8e8" stroke="#e04828" stroke-width="0.800"/>
<path d="M198.2 102.8l6.400-2v6l-6.400 2z" fill="#3a3a90" stroke="#20205a" stroke-width="0.400"/><path d="M198.2 105.4l6.400-2" stroke="#c0c4e8" stroke-width="0.500"/>
<path d="M197.600 118.800l2-5 1.600.6.400 1.200 1-.4 2.400 4.600-2.400 1-1.200-2.600-.800.400-.8 2z" fill="#222e68"/>
<circle cx="198.800" cy="126.800" r="1.700" fill="#2828b8"/><text x="196.600" y="133.400" font-family="Liberation Sans, sans-serif" font-size="3.600" font-weight="bold" fill="#222">123</text>
<path d="M197.200 138l1.400 6.600 6.400-3.400" stroke="#444" stroke-width="0.6" fill="none"/><path d="M203 138.600l2 1.600" stroke="#5a5ab0" stroke-width="1.600"/>
<rect x="197.400" y="147.400" width="3.600" height="3.200" fill="#4a4aa0"/><text x="196.600" y="154.600" font-family="Liberation Sans, sans-serif" font-size="3.600" font-weight="bold" fill="#333">ABC</text>
<rect x="195.800" y="152.400" width="11.400" height="11.600" fill="#f8c488" stroke="#eca050" stroke-width="0.500"/><path d="M198.400 154v4" stroke="#d01818" stroke-width="1.100"/><text x="196.800" y="163" font-family="Liberation Sans, sans-serif" font-size="3.800" font-weight="bold" fill="#a01818">ABC</text>
<path d="M197.200 170l7.600-2.400M197.600 166l1.800 5.400" stroke="#d01818" stroke-width="1"/><path d="M200 167.600l5 1.600-1.400 3.200" stroke="#4a4aa8" stroke-width="0.900" fill="none"/>
<path d="M197.400 178.200l8.200-1.800-.6 6-7 2z" fill="#3858b8" stroke="#20306a" stroke-width="0.500"/>
<path d="M198.200 188.800h6l1 6.200h-8z" fill="#8888b8" stroke="#44446a" stroke-width="0.500"/><rect x="199.800" y="186.400" width="2.800" height="2.400" rx="0.800" fill="#9898c0" stroke="#44446a" stroke-width="0.400"/>
<defs><linearGradient id="gg" x1="0" y1="0" x2="1" y2="1"><stop offset="0" stop-color="#b0b0b0"/><stop offset="1" stop-color="#6a6a6a"/></linearGradient></defs>
<rect x="3.600" y="37.400" width="8.600" height="6.400" rx="0.800" fill="url(#gg)" stroke="#555" stroke-width="0.400"/>
<rect x="18.400" y="37.600" width="5.400" height="5" fill="#c4c8cc" stroke="#8a8e92" stroke-width="0.400"/><circle cx="18.600" cy="43" r="1.500" fill="#2878e0"/><circle cx="22.600" cy="45.400" r="1.400" fill="#2878e0"/><circle cx="24.400" cy="42" r="1.300" fill="#2878e0"/><circle cx="23.600" cy="38.600" r="1.100" fill="#2878e0"/>
<circle cx="185.600" cy="54.200" r="1.500" fill="none" stroke="#777" stroke-width="0.500"/><path d="M186.600 55.400l1.400 1.400" stroke="#777" stroke-width="0.600"/>
<path d="M3 66l4-1.600v6l-4 1.600zM7.600 65.400l4-1.800v6l-4 1.800z" fill="#4858b0" stroke="#28307a" stroke-width="0.400"/>
<path d="M13.5 68.1h2.600l-1.300 1.700z" fill="#222"/>
<ellipse cx="22.4" cy="65.6" rx="4" ry="2" fill="#e8ecf8" stroke="#8a8a9a" stroke-width="0.500"/><circle cx="22.4" cy="65.6" r="1.400" fill="#5878c0"/>
<rect x="23.2" y="67.200" width="3.200" height="5.400" fill="#e4e8f0" stroke="#8a8e98" stroke-width="0.400"/><rect x="24.1" y="68.200" width="1.400" height="1.200" fill="#4868d0"/>
<ellipse cx="35.0" cy="65.6" rx="4" ry="2" fill="#e8ecf8" stroke="#8a8a9a" stroke-width="0.500"/><circle cx="35.0" cy="65.6" r="1.400" fill="#5878c0"/>
<rect x="35.8" y="67.200" width="3.200" height="5.400" fill="#e4e8f0" stroke="#8a8e98" stroke-width="0.400"/><rect x="36.7" y="68.200" width="1.400" height="1.200" fill="#4868d0"/>
<ellipse cx="47.0" cy="65.6" rx="4" ry="2" fill="#e8ecf8" stroke="#8a8a9a" stroke-width="0.500"/><circle cx="47.0" cy="65.6" r="1.400" fill="#5878c0"/>
<rect x="47.8" y="67.200" width="3.200" height="5.400" fill="#e4e8f0" stroke="#8a8e98" stroke-width="0.400"/><rect x="48.7" y="68.200" width="1.400" height="1.200" fill="#4868d0"/>
<ellipse cx="116.100" cy="68" rx="3.600" ry="2.300" fill="#2030c0" stroke="#101870" stroke-width="0.400"/>
<path d="M121.6 68.1h2.600l-1.300 1.700z" fill="#222"/>
<path d="M125.600 66.400l4-1.600v6l-4 1.600zM130.200 65.800l4-1.800v6l-4 1.800z" fill="#4858b0" stroke="#28307a" stroke-width="0.400"/>
<path d="M136.2 68.1h2.600l-1.300 1.700z" fill="#222"/>
<path d="M143.400 64.600v6.200l1.600-1.400 1.200 2.600 1-.4-1.200-2.600h2z" fill="#fafafa" stroke="#444" stroke-width="0.500"/>
<rect x="154.400" y="68.600" width="8" height="3.400" fill="#f0f070" stroke="#80d8e0" stroke-width="0.500"/><path d="M155 67.800h5.600M159.400 65.400l1.400 2.400" stroke="#333" stroke-width="0.600"/>
<ellipse cx="170.8" cy="66.6" rx="4" ry="2" fill="#e8ecf8" stroke="#8a8a9a" stroke-width="0.500"/><circle cx="170.8" cy="66.6" r="1.400" fill="#5878c0"/>
<path d="M167.400 71h2M168.400 70v2M171.400 71h2" stroke="#222" stroke-width="0.600"/>
<ellipse cx="183.4" cy="66.6" rx="4" ry="2" fill="#e8ecf8" stroke="#8a8a9a" stroke-width="0.500"/><circle cx="183.4" cy="66.6" r="1.400" fill="#5878c0"/>
<path d="M185.800 70v2" stroke="#222" stroke-width="0.600"/>
<circle cx="104" cy="81.400" r="2.800" fill="#e03030"/><path d="M104 81.400l0-2.800a2.800 2.800 0 0 1 2.400 4.200z" fill="#30c030"/><path d="M104 81.400l2.400 1.400a2.800 2.800 0 0 1-4.800 0z" fill="#3030e0"/><path d="M104 81.400l-2.400 1.400a2.800 2.800 0 0 1 0-2.800z" fill="#e030e0"/><path d="M104 81.400l0-2.800a2.800 2.800 0 0 0-2.400 1.400z" fill="#e0d030"/>
<path d="M131.400 79.400l2.600-1 2.600 1v3.200l-2.600 1.200-2.600-1.200z" fill="#555" stroke="#222" stroke-width="0.400"/><path d="M134 80.400v3.400" stroke="#ddd" stroke-width="0.400"/>
<path d="M43.800 76.800l1.200-1.200 1.200 1.200" fill="none" stroke="#6aa0d8" stroke-width="0.500"/>
<rect x="209" y="35" width="588.300" height="268.700" fill="none" stroke="#35cbe0" stroke-width="0.9"/>
<text x="495.4" y="44" font-family="Liberation Sans, sans-serif" font-size="8.7" fill="#f8f8f8" textLength="298" lengthAdjust="spacingAndGlyphs">Model Info: C:/Users/A.GANGADHARA/OneDrive/Desktop/cracing/assignment6/first.hm*</text>
<defs><radialGradient id="nd" cx="0.4" cy="0.35" r="0.7"><stop offset="0" stop-color="#ffffff"/><stop offset="0.7" stop-color="#e8e8e8"/><stop offset="1" stop-color="#b0b0b0"/></radialGradient></defs>
<circle cx="491.5" cy="142.9" r="3" fill="url(#nd)"/>
<ellipse cx="492.6" cy="141.3" rx="12.4" ry="9.8" fill="none" stroke="#ee1c25" stroke-width="2"/>
<path d="M479.4 144.6C472.7 148.4 472.5 148.5 459.3 155.9C446.1 163.3 450.4 159.9 439.8 166.8C429.2 173.7 435.7 170.5 427.6 176.6C419.5 182.7 421.9 180.6 415.4 185.1C408.9 189.6 416.1 185.8 408.0 190.0C399.9 194.2 402.4 192.9 391.0 197.8C379.6 202.7 384.5 199.9 373.9 204.6C363.3 209.3 369.1 206.3 359.3 212.0C349.5 217.7 354.4 214.4 344.6 221.7C334.8 229.0 339.9 224.0 330.0 233.9C320.1 243.8 324.7 239.1 315.0 251.5C305.3 263.9 307.7 261.5 301.0 271.0C294.3 280.5 298.8 272.3 294.8 280.0C290.8 287.7 291.9 286.0 289.0 294.0C286.1 302.0 287.9 296.0 286.0 304.0C284.1 312.0 284.1 309.0 283.3 318.0C282.5 327.0 283.4 326.7 283.5 331.0" fill="none" stroke="#ee1c25" stroke-width="1.7" stroke-linecap="round"/>
<path d="M465 143.4L479.6 144.4L477 155.6" fill="none" stroke="#ee1c25" stroke-width="1.8" stroke-linecap="round" stroke-linejoin="round"/>
<path d="M504.4 146.3C509.6 148.0 508.1 147.7 520.0 151.3C531.9 154.9 518.7 150.9 540.0 157.0C561.3 163.1 559.6 161.8 583.8 169.5C608.0 177.2 594.5 173.2 612.7 180.0C630.9 186.8 623.6 184.2 638.4 190.0C653.2 195.8 638.1 188.4 657.0 197.4C675.9 206.4 673.3 203.3 695.0 217.0C716.7 230.7 706.7 224.3 722.0 238.5C737.3 252.7 732.2 249.0 741.0 259.5C749.8 270.0 744.2 262.3 748.5 270.0C752.8 277.7 750.6 274.2 754.0 282.7C757.4 291.2 756.1 287.0 758.8 295.4C761.5 303.8 760.1 300.1 762.0 308.0C763.9 315.9 763.0 311.9 764.4 319.2C765.8 326.5 765.7 326.4 766.3 330.0" fill="none" stroke="#ee1c25" stroke-width="1.7" stroke-linecap="round"/>
<path d="M760.4 326.3L766.3 330.3L771.2 320.5" fill="none" stroke="#ee1c25" stroke-width="1.6" stroke-linecap="round" stroke-linejoin="round"/>
<g font-family="Liberation Sans, sans-serif" font-size="6.700" fill="#fbeaf4">
<text x="238.300" y="259">Z</text><text x="213.300" y="276">X</text><text x="239.500" y="298.800">Y</text></g>
<path d="M241.200 276.200L219 276.200" stroke="#f01828" stroke-width="0.600"/><path d="M217.900 276.200l8.600 -1.500v3z" fill="#f01828"/>
<path d="M241.200 276.200L239.500 266" stroke="#6028e0" stroke-width="1.200"/><path d="M238.900 262.800l-1.200 5.200h3.200z" fill="#4a28e8"/>
<path d="M241.200 276.200L240.900 288" stroke="#98a848" stroke-width="1.100"/><path d="M240.800 288L240.700 292" stroke="#38d038" stroke-width="1.300"/><path d="M240.700 295.200l-1.700 -6.600h3.400z" fill="#30d030"/>
</svg>
</body></html>
